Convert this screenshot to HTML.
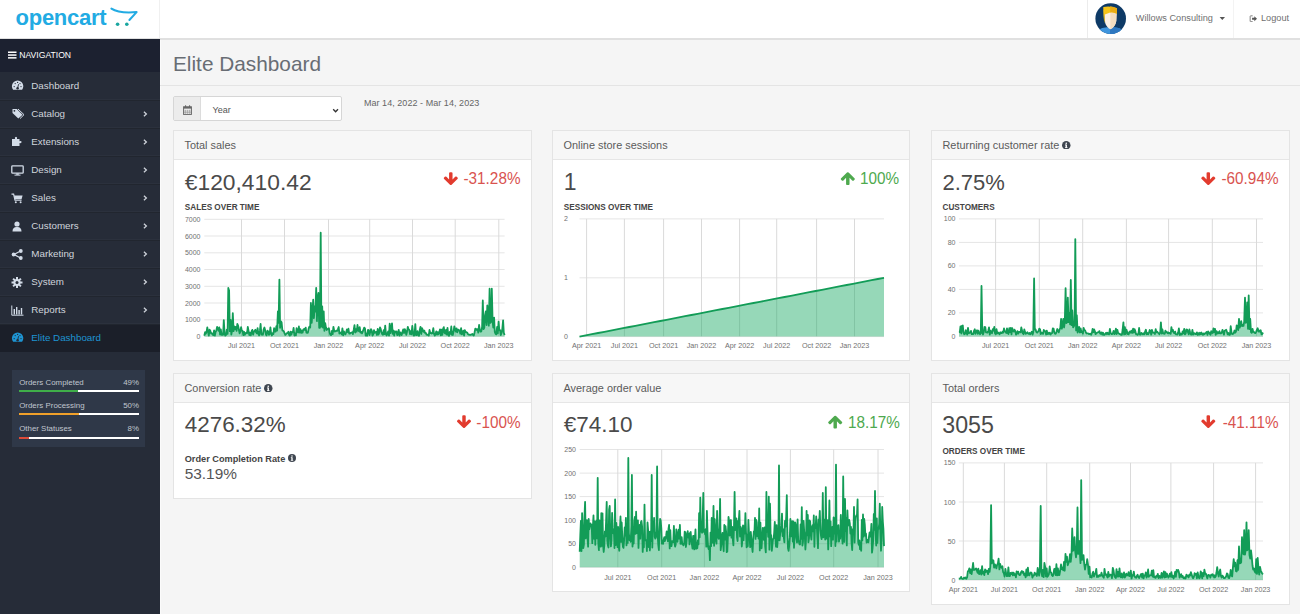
<!DOCTYPE html>
<html><head><meta charset="utf-8"><title>Elite Dashboard</title>
<style>
html,body{margin:0;padding:0;width:1300px;height:614px;overflow:hidden;background:#f5f5f5;font-family:"Liberation Sans",sans-serif}
.t{position:absolute;white-space:nowrap}
.r{position:absolute}
.icon{position:absolute;width:13px;height:11px}
.info{display:inline-block;width:8px;height:8px;border-radius:50%;background:#444;color:#fff;font-size:6.5px;line-height:8px;text-align:center;font-weight:700;vertical-align:1px}
svg text{font-family:"Liberation Sans",sans-serif}
</style></head><body>
<div class="r" style="left:0px;top:0px;width:1300px;height:614px;background:#f5f5f5;"></div>
<div class="r" style="left:0px;top:0px;width:1300px;height:38px;background:#fff;"></div>
<div class="r" style="left:0px;top:38px;width:1300px;height:2px;background:#e0e0e0;"></div>
<div class="r" style="left:159px;top:0px;width:1px;height:38px;background:#f0f0f0;"></div>
<div class="t" style="left:15.50px;top:7.40px;font-size:22px;line-height:22px;color:#22abe3;font-weight:700;letter-spacing:-0.25px;">opencart</div>
<svg class="r" style="left:105px;top:4px" width="40" height="30" viewBox="105 4 40 30">
<path d="M111.4 8.6 Q 119 13.6 136.6 12.1 L 129.4 20" fill="none" stroke="#22abe3" stroke-width="2" stroke-linecap="round" stroke-linejoin="round"/>
<circle cx="117.6" cy="24.2" r="1.8" fill="#1aa6a0"/><circle cx="126.8" cy="24.2" r="1.8" fill="#1aa6a0"/>
</svg>
<div class="r" style="left:1087px;top:0px;width:1px;height:38px;background:#ececec;"></div>
<div class="r" style="left:1233px;top:0px;width:1px;height:38px;background:#f3f3f3;"></div>
<svg class="r" style="left:1094px;top:2px" width="34" height="34" viewBox="0 0 34 34">
<defs><clipPath id="av"><circle cx="16.7" cy="16.6" r="15.3"/></clipPath></defs>
<circle cx="16.7" cy="16.6" r="15.3" fill="#0e3a66"/>
<g clip-path="url(#av)">
<path d="M2 34 L4 28 Q9 24.5 16 25.5 Q24 24.5 29 28 L31 34 Z" fill="#3f95dd"/>
<path d="M16 25.5 Q24 24.5 29 28 L31 34 L16 34 Z" fill="#2f78c0"/>
<path d="M9.8 8 L22.8 7 L22.3 19 Q21.2 25 16.3 27.3 Q12.6 25.6 11.2 21 Z" fill="#fcf1e4"/>
<path d="M16.3 7.5 L22.8 7 L22.3 19 Q21.2 25 16.3 27.3 Z" fill="#f3ddc0"/>
<path d="M9.3 5 Q16 3.4 23 6.3 L22.9 11.8 Q19.5 9.8 16.2 10.4 L10.8 12.6 L10.7 21.4 Q9 15 9.3 5 Z" fill="#f6c51a"/>
<path d="M16.2 4.3 Q20 4.6 23 6.3 L22.9 11.8 Q19.5 9.8 16.2 10.4 Z" fill="#e9ab12"/>
</g></svg>
<div class="t" style="left:1135.80px;top:14.48px;font-size:9.2px;line-height:9.2px;color:#707070;font-weight:400;">Willows Consulting</div>
<svg class="r" style="left:1219px;top:16px" width="7" height="5" viewBox="0 0 7 5"><path d="M0.6 1 L6 1 L3.3 4 Z" fill="#555"/></svg>
<svg class="r" style="left:1248.8px;top:14.8px" width="9" height="7.5" viewBox="0 0 10 9">
<path d="M4 1 H1.6 Q1 1 1 1.6 V7.4 Q1 8 1.6 8 H4" fill="none" stroke="#777" stroke-width="1.1"/>
<path d="M3.3 3.4 H6 V1.5 L9.2 4.5 L6 7.5 V5.6 H3.3 Z" fill="#555"/></svg>
<div class="t" style="left:1261.00px;top:14.48px;font-size:9.2px;line-height:9.2px;color:#707070;font-weight:400;">Logout</div>
<div class="r" style="left:0px;top:39px;width:160px;height:575px;background:#262c38;"></div>
<div class="r" style="left:0px;top:39px;width:160px;height:33px;background:#1c2130;"></div>
<svg class="r" style="left:8px;top:51px" width="9" height="8" viewBox="0 0 9 8"><rect x="0" y="0.5" width="8.5" height="1.5" fill="#fff"/><rect x="0" y="3.3" width="8.5" height="1.5" fill="#fff"/><rect x="0" y="6.1" width="8.5" height="1.5" fill="#fff"/></svg>
<div class="t" style="left:19.20px;top:51.25px;font-size:8.65px;line-height:8.65px;color:#fff;font-weight:400;">NAVIGATION</div>
<div class="r" style="left:0px;top:99px;width:160px;height:1px;background:#2b313d;"></div>
<div class="r" style="left:0px;top:100px;width:160px;height:1px;background:#21262f;"></div>
<div class="t" style="left:31.30px;top:80.87px;font-size:9.8px;line-height:9.8px;color:#d0d5dc;font-weight:400;">Dashboard</div>
<div class="icon" style="left:11px;top:80.3px;color:#d0d5dc"><svg width="13" height="11" viewBox="0 0 13 11" style="display:block"><path d="M2.1 9.8 A5.7 5.7 0 1 1 11.1 9.8 Z" fill="#d3dce8"/><circle cx="6.6" cy="8.2" r="1.2" fill="#262c38"/><path d="M6.6 8.2 L7.6 4.2" stroke="#262c38" stroke-width="0.9"/><circle cx="3.2" cy="6.6" r="0.65" fill="#262c38"/><circle cx="4.2" cy="3.6" r="0.65" fill="#262c38"/><circle cx="6.6" cy="2.4" r="0.65" fill="#262c38"/><circle cx="9" cy="3.6" r="0.65" fill="#262c38"/><circle cx="10" cy="6.6" r="0.65" fill="#262c38"/></svg></div>
<div class="r" style="left:0px;top:127px;width:160px;height:1px;background:#2b313d;"></div>
<div class="r" style="left:0px;top:128px;width:160px;height:1px;background:#21262f;"></div>
<div class="t" style="left:31.30px;top:108.87px;font-size:9.8px;line-height:9.8px;color:#d0d5dc;font-weight:400;">Catalog</div>
<svg class="r" style="left:143px;top:111px" width="5" height="6" viewBox="0 0 5 6"><path d="M0.9 0.7 L3.4 3 L0.9 5.3" fill="none" stroke="#d0d5dc" stroke-width="1.25"/></svg>
<div class="icon" style="left:11.5px;top:107.8px;color:#d0d5dc"><svg width="13" height="11" viewBox="0 0 13 11" style="display:block"><path d="M0.5 1 H4.8 L10.5 6.7 L6.3 10.6 L0.5 5 Z" fill="#d3dce8"/><path d="M6 1 L12 6.7 L8 10.6" fill="none" stroke="#d3dce8" stroke-width="1"/><circle cx="2.4" cy="2.8" r="0.9" fill="#262c38"/></svg></div>
<div class="r" style="left:0px;top:155px;width:160px;height:1px;background:#2b313d;"></div>
<div class="r" style="left:0px;top:156px;width:160px;height:1px;background:#21262f;"></div>
<div class="t" style="left:31.30px;top:136.87px;font-size:9.8px;line-height:9.8px;color:#d0d5dc;font-weight:400;">Extensions</div>
<svg class="r" style="left:143px;top:139px" width="5" height="6" viewBox="0 0 5 6"><path d="M0.9 0.7 L3.4 3 L0.9 5.3" fill="none" stroke="#d0d5dc" stroke-width="1.25"/></svg>
<div class="icon" style="left:11px;top:135.8px;color:#d0d5dc"><svg width="13" height="11" viewBox="0 0 13 11" style="display:block"><path d="M1 3 H4 Q3.3 1 5 0.8 Q6.7 1 6 3 H8.5 V5.2 Q10.5 4.5 10.6 6 Q10.5 7.6 8.5 7 V10 H1 Z" fill="#d3dce8"/></svg></div>
<div class="r" style="left:0px;top:183px;width:160px;height:1px;background:#2b313d;"></div>
<div class="r" style="left:0px;top:184px;width:160px;height:1px;background:#21262f;"></div>
<div class="t" style="left:31.30px;top:164.87px;font-size:9.8px;line-height:9.8px;color:#d0d5dc;font-weight:400;">Design</div>
<svg class="r" style="left:143px;top:167px" width="5" height="6" viewBox="0 0 5 6"><path d="M0.9 0.7 L3.4 3 L0.9 5.3" fill="none" stroke="#d0d5dc" stroke-width="1.25"/></svg>
<div class="icon" style="left:11px;top:165px;color:#d0d5dc"><svg width="13" height="11" viewBox="0 0 13 11" style="display:block"><rect x="0.8" y="0.8" width="11.4" height="7.4" rx="0.8" fill="none" stroke="#d3dce8" stroke-width="1.3"/><rect x="5.2" y="8.4" width="2.6" height="1.4" fill="#d3dce8"/><rect x="3.5" y="9.6" width="6" height="1" fill="#d3dce8"/></svg></div>
<div class="r" style="left:0px;top:211px;width:160px;height:1px;background:#2b313d;"></div>
<div class="r" style="left:0px;top:212px;width:160px;height:1px;background:#21262f;"></div>
<div class="t" style="left:31.30px;top:192.87px;font-size:9.8px;line-height:9.8px;color:#d0d5dc;font-weight:400;">Sales</div>
<svg class="r" style="left:143px;top:195px" width="5" height="6" viewBox="0 0 5 6"><path d="M0.9 0.7 L3.4 3 L0.9 5.3" fill="none" stroke="#d0d5dc" stroke-width="1.25"/></svg>
<div class="icon" style="left:11px;top:193px;color:#d0d5dc"><svg width="13" height="11" viewBox="0 0 13 11" style="display:block"><path d="M0.5 1.2 H2.6 L4 7.2 H10.6" fill="none" stroke="#d3dce8" stroke-width="1.2"/><path d="M3 2.6 H11.6 L10.6 6 H3.8 Z" fill="#d3dce8"/><circle cx="4.8" cy="9.3" r="1" fill="#d3dce8"/><circle cx="9.6" cy="9.3" r="1" fill="#d3dce8"/></svg></div>
<div class="r" style="left:0px;top:239px;width:160px;height:1px;background:#2b313d;"></div>
<div class="r" style="left:0px;top:240px;width:160px;height:1px;background:#21262f;"></div>
<div class="t" style="left:31.30px;top:220.87px;font-size:9.8px;line-height:9.8px;color:#d0d5dc;font-weight:400;">Customers</div>
<svg class="r" style="left:143px;top:223px" width="5" height="6" viewBox="0 0 5 6"><path d="M0.9 0.7 L3.4 3 L0.9 5.3" fill="none" stroke="#d0d5dc" stroke-width="1.25"/></svg>
<div class="icon" style="left:11px;top:221px;color:#d0d5dc"><svg width="13" height="11" viewBox="0 0 13 11" style="display:block"><circle cx="6" cy="3" r="2.6" fill="#d3dce8"/><path d="M1.5 10.5 Q1.5 5.8 6 6 Q10.5 5.8 10.5 10.5 Z" fill="#d3dce8"/></svg></div>
<div class="r" style="left:0px;top:267px;width:160px;height:1px;background:#2b313d;"></div>
<div class="r" style="left:0px;top:268px;width:160px;height:1px;background:#21262f;"></div>
<div class="t" style="left:31.30px;top:248.87px;font-size:9.8px;line-height:9.8px;color:#d0d5dc;font-weight:400;">Marketing</div>
<svg class="r" style="left:143px;top:251px" width="5" height="6" viewBox="0 0 5 6"><path d="M0.9 0.7 L3.4 3 L0.9 5.3" fill="none" stroke="#d0d5dc" stroke-width="1.25"/></svg>
<div class="icon" style="left:11px;top:249px;color:#d0d5dc"><svg width="13" height="11" viewBox="0 0 13 11" style="display:block"><path d="M9.5 2 L3 5.5 L9.5 9" fill="none" stroke="#d3dce8" stroke-width="1.3"/><circle cx="9.8" cy="2" r="1.9" fill="#d3dce8"/><circle cx="2.6" cy="5.5" r="1.9" fill="#d3dce8"/><circle cx="9.8" cy="9" r="1.9" fill="#d3dce8"/></svg></div>
<div class="r" style="left:0px;top:295px;width:160px;height:1px;background:#2b313d;"></div>
<div class="r" style="left:0px;top:296px;width:160px;height:1px;background:#21262f;"></div>
<div class="t" style="left:31.30px;top:276.87px;font-size:9.8px;line-height:9.8px;color:#d0d5dc;font-weight:400;">System</div>
<svg class="r" style="left:143px;top:279px" width="5" height="6" viewBox="0 0 5 6"><path d="M0.9 0.7 L3.4 3 L0.9 5.3" fill="none" stroke="#d0d5dc" stroke-width="1.25"/></svg>
<div class="icon" style="left:11px;top:277px;color:#d0d5dc"><svg width="13" height="11" viewBox="0 0 13 11" style="display:block"><circle cx="6" cy="5.5" r="3.6" fill="#d3dce8"/><rect x="5" y="0" width="2" height="11" fill="#d3dce8" transform="rotate(0 6 5.5)"/><rect x="5" y="0" width="2" height="11" fill="#d3dce8" transform="rotate(45 6 5.5)"/><rect x="5" y="0" width="2" height="11" fill="#d3dce8" transform="rotate(90 6 5.5)"/><rect x="5" y="0" width="2" height="11" fill="#d3dce8" transform="rotate(135 6 5.5)"/><circle cx="6" cy="5.5" r="1.5" fill="#262c38"/></svg></div>
<div class="r" style="left:0px;top:323px;width:160px;height:1px;background:#2b313d;"></div>
<div class="r" style="left:0px;top:324px;width:160px;height:1px;background:#21262f;"></div>
<div class="t" style="left:31.30px;top:304.87px;font-size:9.8px;line-height:9.8px;color:#d0d5dc;font-weight:400;">Reports</div>
<svg class="r" style="left:143px;top:307px" width="5" height="6" viewBox="0 0 5 6"><path d="M0.9 0.7 L3.4 3 L0.9 5.3" fill="none" stroke="#d0d5dc" stroke-width="1.25"/></svg>
<div class="icon" style="left:11px;top:305px;color:#d0d5dc"><svg width="13" height="11" viewBox="0 0 13 11" style="display:block"><path d="M0.8 0.5 V10.2 H12.5" fill="none" stroke="#d3dce8" stroke-width="1"/><rect x="2.6" y="4" width="1.4" height="5.5" fill="#d3dce8"/><rect x="5" y="2" width="1.4" height="7.5" fill="#d3dce8"/><rect x="7.4" y="5" width="1.4" height="4.5" fill="#d3dce8"/><rect x="9.8" y="3" width="1.4" height="6.5" fill="#d3dce8"/></svg></div>
<div class="r" style="left:0px;top:325px;width:160px;height:27px;background:#1b1f29;"></div>
<div class="t" style="left:31.30px;top:332.87px;font-size:9.8px;line-height:9.8px;color:#1e95d3;font-weight:400;">Elite Dashboard</div>
<div class="icon" style="left:11px;top:332.3px;color:#1e95d3"><svg width="13" height="11" viewBox="0 0 13 11" style="display:block"><path d="M2.1 9.8 A5.7 5.7 0 1 1 11.1 9.8 Z" fill="#1e95d3"/><circle cx="6.6" cy="8.2" r="1.2" fill="#262c38"/><path d="M6.6 8.2 L7.6 4.2" stroke="#262c38" stroke-width="0.9"/><circle cx="3.2" cy="6.6" r="0.65" fill="#262c38"/><circle cx="4.2" cy="3.6" r="0.65" fill="#262c38"/><circle cx="6.6" cy="2.4" r="0.65" fill="#262c38"/><circle cx="9" cy="3.6" r="0.65" fill="#262c38"/><circle cx="10" cy="6.6" r="0.65" fill="#262c38"/></svg></div>
<div class="r" style="left:160px;top:40px;width:1px;height:574px;background:#fbfbfb;"></div>
<div class="r" style="left:12px;top:370px;width:133px;height:77px;background:#2f3848;"></div>
<div class="t" style="left:19.20px;top:378.59px;font-size:7.9px;line-height:7.9px;color:#c0c6cf;font-weight:400;">Orders Completed</div>
<div class="t" style="right:1161.00px;top:378.59px;font-size:7.9px;line-height:7.9px;color:#c0c6cf;font-weight:400;">49%</div>
<div class="r" style="left:19px;top:390px;width:120px;height:2px;background:#fff;"></div>
<div class="r" style="left:19px;top:390px;width:58.8px;height:2px;background:#3fae49;"></div>
<div class="t" style="left:19.20px;top:402.09px;font-size:7.9px;line-height:7.9px;color:#c0c6cf;font-weight:400;">Orders Processing</div>
<div class="t" style="right:1161.00px;top:402.09px;font-size:7.9px;line-height:7.9px;color:#c0c6cf;font-weight:400;">50%</div>
<div class="r" style="left:19px;top:413.4px;width:120px;height:2.0px;background:#fff;"></div>
<div class="r" style="left:19px;top:413.4px;width:60.0px;height:2.0px;background:#f0a02a;"></div>
<div class="t" style="left:19.20px;top:425.09px;font-size:7.9px;line-height:7.9px;color:#c0c6cf;font-weight:400;">Other Statuses</div>
<div class="t" style="right:1161.00px;top:425.09px;font-size:7.9px;line-height:7.9px;color:#c0c6cf;font-weight:400;">8%</div>
<div class="r" style="left:19px;top:436.5px;width:120px;height:2.0px;background:#fff;"></div>
<div class="r" style="left:19px;top:436.5px;width:9.600000000000001px;height:2.0px;background:#dd4b39;"></div>
<div class="t" style="left:173.00px;top:54.22px;font-size:20.8px;line-height:20.8px;color:#686d74;font-weight:400;">Elite Dashboard</div>
<div class="r" style="left:160px;top:85px;width:1140px;height:1px;background:#e4e4e4;"></div>
<div class="r" style="left:173px;top:96px;width:167px;height:23px;border:1px solid #d6d6d6;border-radius:2px;background:#fff"></div>
<div class="r" style="left:174px;top:97px;width:26px;height:23px;background:#ececec;"></div>
<div class="r" style="left:200px;top:97px;width:1px;height:23px;background:#dcdcdc;"></div>
<svg class="r" style="left:182.5px;top:104.5px" width="9" height="10" viewBox="0 0 9 10">
<rect x="0.6" y="1.8" width="7.8" height="7.6" fill="none" stroke="#666" stroke-width="1"/>
<rect x="0.6" y="1.8" width="7.8" height="1.8" fill="#666"/>
<rect x="2" y="0.3" width="1.1" height="2" fill="#666"/><rect x="6" y="0.3" width="1.1" height="2" fill="#666"/>
<path d="M2.5 4.8 V8.8 M4.5 4.8 V8.8 M6.5 4.8 V8.8 M1 6.1 H8 M1 7.5 H8" stroke="#999" stroke-width="0.6"/></svg>
<div class="t" style="left:212.60px;top:105.85px;font-size:9px;line-height:9px;color:#555;font-weight:400;">Year</div>
<svg class="r" style="left:331.5px;top:107.5px" width="8" height="6" viewBox="0 0 8 6"><path d="M1.2 1.2 L3.6 3.8 L6 1.2" fill="none" stroke="#333" stroke-width="1.3"/></svg>
<div class="t" style="left:363.90px;top:98.85px;font-size:9px;line-height:9px;color:#666;font-weight:400;letter-spacing:0.05px;">Mar 14, 2022 - Mar 14, 2023</div>
<div class="r" style="left:173px;top:130px;width:357px;height:229px;border:1px solid #e4e4e4;background:#fff"></div>
<div class="r" style="left:174px;top:131px;width:357px;height:28px;background:#f7f7f7;"></div>
<div class="r" style="left:174px;top:159px;width:357px;height:1px;background:#e6e6e6;"></div>
<div class="t" style="left:184.50px;top:139.54px;font-size:10.9px;line-height:10.9px;color:#5b5b5b;font-weight:400;">Total sales</div>
<div class="r" style="left:552px;top:130px;width:356px;height:229px;border:1px solid #e4e4e4;background:#fff"></div>
<div class="r" style="left:553px;top:131px;width:356px;height:28px;background:#f7f7f7;"></div>
<div class="r" style="left:553px;top:159px;width:356px;height:1px;background:#e6e6e6;"></div>
<div class="t" style="left:563.50px;top:139.54px;font-size:10.9px;line-height:10.9px;color:#5b5b5b;font-weight:400;">Online store sessions</div>
<div class="r" style="left:931px;top:130px;width:357px;height:229px;border:1px solid #e4e4e4;background:#fff"></div>
<div class="r" style="left:932px;top:131px;width:357px;height:28px;background:#f7f7f7;"></div>
<div class="r" style="left:932px;top:159px;width:357px;height:1px;background:#e6e6e6;"></div>
<div class="t" style="left:942.50px;top:139.54px;font-size:10.9px;line-height:10.9px;color:#5b5b5b;font-weight:400;">Returning customer rate <svg width="8.5" height="8.5" viewBox="0 0 10 10" style="vertical-align:-0.5px"><circle cx="5" cy="5" r="5" fill="#3f4650"/><rect x="4.2" y="4.2" width="1.6" height="3.9" fill="#fff"/><rect x="3.5" y="7.4" width="3" height="0.9" fill="#fff"/><rect x="3.5" y="4.2" width="1.6" height="0.9" fill="#fff"/><circle cx="5" cy="2.6" r="0.95" fill="#fff"/></svg></div>
<div class="r" style="left:173px;top:373px;width:357px;height:124px;border:1px solid #e4e4e4;background:#fff"></div>
<div class="r" style="left:174px;top:374px;width:357px;height:28px;background:#f7f7f7;"></div>
<div class="r" style="left:174px;top:402px;width:357px;height:1px;background:#e6e6e6;"></div>
<div class="t" style="left:184.50px;top:382.54px;font-size:10.9px;line-height:10.9px;color:#5b5b5b;font-weight:400;">Conversion rate <svg width="8.5" height="8.5" viewBox="0 0 10 10" style="vertical-align:-0.5px"><circle cx="5" cy="5" r="5" fill="#3f4650"/><rect x="4.2" y="4.2" width="1.6" height="3.9" fill="#fff"/><rect x="3.5" y="7.4" width="3" height="0.9" fill="#fff"/><rect x="3.5" y="4.2" width="1.6" height="0.9" fill="#fff"/><circle cx="5" cy="2.6" r="0.95" fill="#fff"/></svg></div>
<div class="r" style="left:552px;top:373px;width:356px;height:217px;border:1px solid #e4e4e4;background:#fff"></div>
<div class="r" style="left:553px;top:374px;width:356px;height:28px;background:#f7f7f7;"></div>
<div class="r" style="left:553px;top:402px;width:356px;height:1px;background:#e6e6e6;"></div>
<div class="t" style="left:563.50px;top:382.54px;font-size:10.9px;line-height:10.9px;color:#5b5b5b;font-weight:400;">Average order value</div>
<div class="r" style="left:931px;top:373px;width:357px;height:230px;border:1px solid #e4e4e4;background:#fff"></div>
<div class="r" style="left:932px;top:374px;width:357px;height:28px;background:#f7f7f7;"></div>
<div class="r" style="left:932px;top:402px;width:357px;height:1px;background:#e6e6e6;"></div>
<div class="t" style="left:942.50px;top:382.54px;font-size:10.9px;line-height:10.9px;color:#5b5b5b;font-weight:400;">Total orders</div>
<div class="t" style="left:184.80px;top:170.82px;font-size:22.8px;line-height:22.8px;color:#4a4a4a;font-weight:400;">€120,410.42</div>
<div class="t" style="left:563.70px;top:170.85px;font-size:23px;line-height:23px;color:#4a4a4a;font-weight:400;transform:scaleY(1.05);transform-origin:0 85%;">1</div>
<div class="t" style="left:942.50px;top:171.60px;font-size:22px;line-height:22px;color:#4a4a4a;font-weight:400;">2.75%</div>
<div class="t" style="left:184.80px;top:414.36px;font-size:22.4px;line-height:22.4px;color:#4a4a4a;font-weight:400;">4276.32%</div>
<div class="t" style="left:563.70px;top:414.27px;font-size:22.5px;line-height:22.5px;color:#4a4a4a;font-weight:400;">€74.10</div>
<div class="t" style="left:942.30px;top:413.58px;font-size:23.2px;line-height:23.2px;color:#4a4a4a;font-weight:400;">3055</div>
<div class="t" style="right:779.50px;top:171.19px;font-size:15.3px;line-height:15.3px;color:#d9534f;font-weight:400;transform:scaleY(1.12);transform-origin:0 85%;">-31.28%</div>
<svg class="r" style="left:0;top:0" width="1300" height="614" viewBox="0 0 1300 614"><path d="M1611 832q0 53-37 90l-651 652q-38 36-91 36-54 0-90-36l-651-652q-38-36-38-90 0-53 38-91l74-75q39-37 91-37 53 0 90 37l294 294v-704q0-52 38-90t90-38h128q52 0 90 38t38 90v704l294-294q37-37 90-37 52 0 91 37l75 75q37 39 37 91z" fill="#e23b2e" transform="translate(443.8,172.2) scale(0.008986,0.008637) translate(-53,-128)"/></svg>
<div class="t" style="right:401.00px;top:171.19px;font-size:15.3px;line-height:15.3px;color:#4ea94e;font-weight:400;transform:scaleY(1.12);transform-origin:0 85%;">100%</div>
<svg class="r" style="left:0;top:0" width="1300" height="614" viewBox="0 0 1300 614"><path d="M1611 971q0 51-37 90l-75 75q-38 38-91 38-54 0-90-38l-294-293v704q0 52-37.5 84.5t-90.5 32.5h-128q-53 0-90.5-32.5t-37.5-84.5v-704l-294 293q-36 38-90 38t-90-38l-75-75q-38-38-38-90 0-53 38-91l651-651q35-37 90-37 54 0 91 37l651 651q37 39 37 91z" fill="#4ea94e" transform="translate(840.8,172.2) scale(0.008986,0.008696) translate(-53,-192)"/></svg>
<div class="t" style="right:21.50px;top:171.19px;font-size:15.3px;line-height:15.3px;color:#d9534f;font-weight:400;transform:scaleY(1.12);transform-origin:0 85%;">-60.94%</div>
<svg class="r" style="left:0;top:0" width="1300" height="614" viewBox="0 0 1300 614"><path d="M1611 832q0 53-37 90l-651 652q-38 36-91 36-54 0-90-36l-651-652q-38-36-38-90 0-53 38-91l74-75q39-37 91-37 53 0 90 37l294 294v-704q0-52 38-90t90-38h128q52 0 90 38t38 90v704l294-294q37-37 90-37 52 0 91 37l75 75q37 39 37 91z" fill="#e23b2e" transform="translate(1201.3,172.2) scale(0.008986,0.008637) translate(-53,-128)"/></svg>
<div class="t" style="right:779.50px;top:414.89px;font-size:15.3px;line-height:15.3px;color:#d9534f;font-weight:400;transform:scaleY(1.12);transform-origin:0 85%;">-100%</div>
<svg class="r" style="left:0;top:0" width="1300" height="614" viewBox="0 0 1300 614"><path d="M1611 832q0 53-37 90l-651 652q-38 36-91 36-54 0-90-36l-651-652q-38-36-38-90 0-53 38-91l74-75q39-37 91-37 53 0 90 37l294 294v-704q0-52 38-90t90-38h128q52 0 90 38t38 90v704l294-294q37-37 90-37 52 0 91 37l75 75q37 39 37 91z" fill="#e23b2e" transform="translate(457,415.2) scale(0.008986,0.008637) translate(-53,-128)"/></svg>
<div class="t" style="right:400.20px;top:414.89px;font-size:15.3px;line-height:15.3px;color:#4ea94e;font-weight:400;transform:scaleY(1.12);transform-origin:0 85%;">18.17%</div>
<svg class="r" style="left:0;top:0" width="1300" height="614" viewBox="0 0 1300 614"><path d="M1611 971q0 51-37 90l-75 75q-38 38-91 38-54 0-90-38l-294-293v704q0 52-37.5 84.5t-90.5 32.5h-128q-53 0-90.5-32.5t-37.5-84.5v-704l-294 293q-36 38-90 38t-90-38l-75-75q-38-38-38-90 0-53 38-91l651-651q35-37 90-37 54 0 91 37l651 651q37 39 37 91z" fill="#4ea94e" transform="translate(828.2,415.7) scale(0.008986,0.008696) translate(-53,-192)"/></svg>
<div class="t" style="right:21.50px;top:414.89px;font-size:15.3px;line-height:15.3px;color:#d9534f;font-weight:400;transform:scaleY(1.12);transform-origin:0 85%;">-41.11%</div>
<svg class="r" style="left:0;top:0" width="1300" height="614" viewBox="0 0 1300 614"><path d="M1611 832q0 53-37 90l-651 652q-38 36-91 36-54 0-90-36l-651-652q-38-36-38-90 0-53 38-91l74-75q39-37 91-37 53 0 90 37l294 294v-704q0-52 38-90t90-38h128q52 0 90 38t38 90v704l294-294q37-37 90-37 52 0 91 37l75 75q37 39 37 91z" fill="#e23b2e" transform="translate(1201.3,415.2) scale(0.008986,0.008637) translate(-53,-128)"/></svg>
<div class="t" style="left:184.80px;top:204.23px;font-size:8.2px;line-height:8.2px;color:#444;font-weight:700;">SALES OVER TIME</div>
<div class="t" style="left:563.80px;top:204.23px;font-size:8.2px;line-height:8.2px;color:#444;font-weight:700;">SESSIONS OVER TIME</div>
<div class="t" style="left:942.50px;top:204.23px;font-size:8.2px;line-height:8.2px;color:#444;font-weight:700;">CUSTOMERS</div>
<div class="t" style="left:942.50px;top:447.53px;font-size:8.2px;line-height:8.2px;color:#444;font-weight:700;">ORDERS OVER TIME</div>
<div class="t" style="left:184.70px;top:453.68px;font-size:9.2px;line-height:9.2px;color:#444;font-weight:700;">Order Completion Rate <svg width="8" height="8" viewBox="0 0 10 10" style="vertical-align:-0.5px"><circle cx="5" cy="5" r="5" fill="#3f4650"/><rect x="4.2" y="4.2" width="1.6" height="3.9" fill="#fff"/><rect x="3.5" y="7.4" width="3" height="0.9" fill="#fff"/><rect x="3.5" y="4.2" width="1.6" height="0.9" fill="#fff"/><circle cx="5" cy="2.6" r="0.95" fill="#fff"/></svg></div>
<div class="t" style="left:184.70px;top:465.91px;font-size:15.4px;line-height:15.4px;color:#555;font-weight:400;">53.19%</div>
<svg class="r" style="left:0;top:0" width="1300" height="614" viewBox="0 0 1300 614">
<line x1="204.3" y1="336.5" x2="504.6" y2="336.5" stroke="#e5e5e5" stroke-width="1"/>
<text x="200.5" y="339" text-anchor="end" font-size="7" fill="#707070">0</text>
<line x1="204.3" y1="319.8" x2="504.6" y2="319.8" stroke="#e5e5e5" stroke-width="1"/>
<text x="200.5" y="322.3" text-anchor="end" font-size="7" fill="#707070">1000</text>
<line x1="204.3" y1="303" x2="504.6" y2="303" stroke="#e5e5e5" stroke-width="1"/>
<text x="200.5" y="305.5" text-anchor="end" font-size="7" fill="#707070">2000</text>
<line x1="204.3" y1="286.3" x2="504.6" y2="286.3" stroke="#e5e5e5" stroke-width="1"/>
<text x="200.5" y="288.8" text-anchor="end" font-size="7" fill="#707070">3000</text>
<line x1="204.3" y1="269.5" x2="504.6" y2="269.5" stroke="#e5e5e5" stroke-width="1"/>
<text x="200.5" y="272" text-anchor="end" font-size="7" fill="#707070">4000</text>
<line x1="204.3" y1="252.8" x2="504.6" y2="252.8" stroke="#e5e5e5" stroke-width="1"/>
<text x="200.5" y="255.3" text-anchor="end" font-size="7" fill="#707070">5000</text>
<line x1="204.3" y1="236" x2="504.6" y2="236" stroke="#e5e5e5" stroke-width="1"/>
<text x="200.5" y="238.5" text-anchor="end" font-size="7" fill="#707070">6000</text>
<line x1="204.3" y1="219.3" x2="504.6" y2="219.3" stroke="#e5e5e5" stroke-width="1"/>
<text x="200.5" y="221.8" text-anchor="end" font-size="7" fill="#707070">7000</text>
<line x1="241.5" y1="219.3" x2="241.5" y2="336.5" stroke="#dadada" stroke-width="1"/>
<line x1="284.5" y1="219.3" x2="284.5" y2="336.5" stroke="#dadada" stroke-width="1"/>
<line x1="328.5" y1="219.3" x2="328.5" y2="336.5" stroke="#dadada" stroke-width="1"/>
<line x1="369.7" y1="219.3" x2="369.7" y2="336.5" stroke="#dadada" stroke-width="1"/>
<line x1="412.5" y1="219.3" x2="412.5" y2="336.5" stroke="#dadada" stroke-width="1"/>
<line x1="455.2" y1="219.3" x2="455.2" y2="336.5" stroke="#dadada" stroke-width="1"/>
<line x1="498.8" y1="219.3" x2="498.8" y2="336.5" stroke="#dadada" stroke-width="1"/>
<text x="241.5" y="347.6" text-anchor="middle" font-size="7.2" fill="#707070">Jul 2021</text>
<text x="284.5" y="347.6" text-anchor="middle" font-size="7.2" fill="#707070">Oct 2021</text>
<text x="328.5" y="347.6" text-anchor="middle" font-size="7.2" fill="#707070">Jan 2022</text>
<text x="369.7" y="347.6" text-anchor="middle" font-size="7.2" fill="#707070">Apr 2022</text>
<text x="412.5" y="347.6" text-anchor="middle" font-size="7.2" fill="#707070">Jul 2022</text>
<text x="455.2" y="347.6" text-anchor="middle" font-size="7.2" fill="#707070">Oct 2022</text>
<text x="498.8" y="347.6" text-anchor="middle" font-size="7.2" fill="#707070">Jan 2023</text>
<polygon points="204.3,336.5 204.3,335.8 205.1,332.2 205.8,333.7 206.6,331.7 207.3,327.3 208.1,332.0 208.8,335.6 209.6,329.7 210.3,330.8 211.1,333.4 211.8,333.1 212.6,334.5 213.3,335.2 214.1,330.3 214.8,335.7 215.6,331.8 216.3,330.7 217.1,326.9 217.8,328.4 218.6,330.8 219.3,327.5 220.1,334.7 220.8,329.5 221.6,334.8 222.3,334.9 223.1,334.8 223.8,320.1 224.6,333.8 225.3,335.6 226.1,334.8 226.8,329.6 227.6,333.9 228.3,287.9 229.1,290.5 229.8,331.2 230.6,319.8 231.3,334.5 232.1,330.6 232.8,313.1 233.6,331.2 234.3,326.5 235.1,329.1 235.8,326.8 236.6,330.9 237.3,324.0 238.1,325.7 238.8,329.2 239.6,333.3 240.3,331.6 241.1,327.1 241.8,330.7 242.6,330.8 243.3,335.2 244.1,331.8 244.8,334.9 245.6,333.2 246.3,332.6 247.1,333.2 247.8,326.9 248.6,331.1 249.3,335.0 250.1,332.8 250.8,335.3 251.6,331.2 252.3,329.9 253.1,334.7 253.8,332.1 254.6,330.6 255.4,329.8 256.1,332.4 256.9,333.3 257.6,328.2 258.4,334.0 259.1,335.4 259.9,330.9 260.6,324.0 261.4,334.6 262.1,334.3 262.9,334.8 263.6,329.6 264.4,327.5 265.1,330.1 265.9,334.4 266.6,335.4 267.4,330.7 268.1,331.4 268.9,334.8 269.6,334.1 270.4,327.4 271.1,333.3 271.9,335.5 272.6,333.1 273.4,334.1 274.1,328.1 274.9,331.6 275.6,331.5 276.4,326.2 277.1,330.7 277.9,311.4 278.6,322.8 279.4,279.6 280.1,327.8 280.9,321.4 281.6,322.3 282.4,330.5 283.1,330.6 283.9,331.5 284.6,333.4 285.4,334.9 286.1,334.0 286.9,333.1 287.6,333.2 288.4,331.8 289.1,334.9 289.9,335.7 290.6,331.7 291.4,334.6 292.1,331.9 292.9,332.1 293.6,327.8 294.4,335.5 295.1,333.5 295.9,335.4 296.6,328.1 297.4,331.4 298.1,332.5 298.9,326.5 299.6,332.6 300.4,329.1 301.1,332.9 301.9,330.6 302.6,332.6 303.4,329.4 304.1,328.9 304.9,330.0 305.7,327.6 306.4,332.7 307.2,332.9 307.9,332.6 308.7,328.4 309.4,326.6 310.2,327.5 310.9,303.0 311.7,322.9 312.4,311.4 313.2,299.7 313.9,318.2 314.7,306.4 315.4,311.5 316.2,287.9 316.9,321.1 317.7,298.0 318.4,293.0 319.2,327.8 319.9,327.8 320.7,232.7 321.4,326.6 322.2,306.4 322.9,327.5 323.7,311.4 324.4,330.8 325.2,323.1 325.9,327.3 326.7,330.0 327.4,329.2 328.2,328.6 328.9,328.2 329.7,333.0 330.4,334.9 331.2,335.1 331.9,331.0 332.7,334.1 333.4,326.8 334.2,330.8 334.9,331.6 335.7,331.1 336.4,330.7 337.2,330.8 337.9,329.3 338.7,327.0 339.4,333.6 340.2,333.1 340.9,332.5 341.7,334.4 342.4,328.4 343.2,335.3 343.9,331.3 344.7,333.0 345.4,334.4 346.2,332.3 346.9,329.5 347.7,332.1 348.4,328.6 349.2,333.6 349.9,333.7 350.7,332.8 351.4,332.6 352.2,332.3 352.9,334.1 353.7,329.9 354.5,325.1 355.2,332.5 356.0,329.1 356.7,331.6 357.5,325.0 358.2,330.1 359.0,331.4 359.7,327.1 360.5,332.7 361.2,331.9 362.0,333.4 362.7,331.6 363.5,329.5 364.2,327.7 365.0,328.5 365.7,335.7 366.5,333.8 367.2,335.7 368.0,329.8 368.7,330.0 369.5,335.0 370.2,332.1 371.0,329.2 371.7,330.5 372.5,335.6 373.2,334.3 374.0,330.2 374.7,332.8 375.5,332.0 376.2,331.8 377.0,335.0 377.7,329.0 378.5,334.5 379.2,332.8 380.0,327.4 380.7,328.9 381.5,332.4 382.2,334.1 383.0,334.7 383.7,330.2 384.5,334.1 385.2,325.6 386.0,334.3 386.7,335.5 387.5,333.3 388.2,331.4 389.0,335.6 389.7,323.6 390.5,333.1 391.2,328.2 392.0,323.3 392.7,333.8 393.5,330.7 394.2,335.6 395.0,331.3 395.7,332.2 396.5,331.4 397.2,335.2 398.0,334.1 398.7,329.9 399.5,335.7 400.2,332.4 401.0,333.5 401.7,335.0 402.5,331.8 403.2,329.4 404.0,333.1 404.8,329.1 405.5,330.9 406.3,334.9 407.0,331.9 407.8,326.8 408.5,329.2 409.3,330.0 410.0,334.0 410.8,331.1 411.5,334.4 412.3,325.8 413.0,332.2 413.8,335.5 414.5,335.4 415.3,324.1 416.0,334.8 416.8,335.1 417.5,331.2 418.3,334.5 419.0,335.8 419.8,329.6 420.5,326.8 421.3,334.0 422.0,328.2 422.8,329.8 423.5,331.8 424.3,330.6 425.0,332.9 425.8,332.9 426.5,334.7 427.3,334.9 428.0,334.7 428.8,335.5 429.5,330.0 430.3,333.2 431.0,332.9 431.8,333.6 432.5,333.1 433.3,328.2 434.0,333.8 434.8,335.6 435.5,334.5 436.3,331.3 437.0,334.6 437.8,332.2 438.5,334.3 439.3,332.2 440.0,329.3 440.8,335.4 441.5,329.7 442.3,334.9 443.0,329.1 443.8,327.2 444.5,332.9 445.3,333.6 446.0,330.0 446.8,334.5 447.5,327.9 448.3,335.1 449.0,335.8 449.8,331.9 450.5,333.9 451.3,326.5 452.0,334.8 452.8,335.0 453.5,331.8 454.3,326.3 455.1,329.4 455.8,331.6 456.6,328.3 457.3,332.3 458.1,329.6 458.8,330.0 459.6,330.8 460.3,333.7 461.1,328.2 461.8,334.3 462.6,333.4 463.3,330.6 464.1,335.7 464.8,330.1 465.6,332.1 466.3,332.2 467.1,332.5 467.8,333.8 468.6,334.7 469.3,334.7 470.1,335.0 470.8,334.7 471.6,334.7 472.3,334.0 473.1,335.0 473.8,335.5 474.6,332.2 475.3,328.6 476.1,329.0 476.8,330.1 477.6,329.2 478.3,332.7 479.1,324.8 479.8,329.9 480.6,331.6 481.3,331.3 482.1,327.0 482.8,300.5 483.6,329.1 484.3,327.8 485.1,315.1 485.8,311.5 486.6,325.0 487.3,305.4 488.1,316.2 488.8,325.7 489.6,288.7 490.3,322.9 491.1,321.8 491.8,288.7 492.6,321.3 493.3,327.7 494.1,317.6 494.8,331.9 495.6,334.0 496.3,334.3 497.1,327.0 497.8,333.4 498.6,321.6 499.3,330.2 500.1,330.1 500.8,335.0 501.6,332.9 502.3,329.0 503.1,320.4 503.8,332.8 504.6,335.1 504.6,336.5" fill="#17a862" fill-opacity="0.45"/>
<polyline points="204.3,335.8 205.1,332.2 205.8,333.7 206.6,331.7 207.3,327.3 208.1,332.0 208.8,335.6 209.6,329.7 210.3,330.8 211.1,333.4 211.8,333.1 212.6,334.5 213.3,335.2 214.1,330.3 214.8,335.7 215.6,331.8 216.3,330.7 217.1,326.9 217.8,328.4 218.6,330.8 219.3,327.5 220.1,334.7 220.8,329.5 221.6,334.8 222.3,334.9 223.1,334.8 223.8,320.1 224.6,333.8 225.3,335.6 226.1,334.8 226.8,329.6 227.6,333.9 228.3,287.9 229.1,290.5 229.8,331.2 230.6,319.8 231.3,334.5 232.1,330.6 232.8,313.1 233.6,331.2 234.3,326.5 235.1,329.1 235.8,326.8 236.6,330.9 237.3,324.0 238.1,325.7 238.8,329.2 239.6,333.3 240.3,331.6 241.1,327.1 241.8,330.7 242.6,330.8 243.3,335.2 244.1,331.8 244.8,334.9 245.6,333.2 246.3,332.6 247.1,333.2 247.8,326.9 248.6,331.1 249.3,335.0 250.1,332.8 250.8,335.3 251.6,331.2 252.3,329.9 253.1,334.7 253.8,332.1 254.6,330.6 255.4,329.8 256.1,332.4 256.9,333.3 257.6,328.2 258.4,334.0 259.1,335.4 259.9,330.9 260.6,324.0 261.4,334.6 262.1,334.3 262.9,334.8 263.6,329.6 264.4,327.5 265.1,330.1 265.9,334.4 266.6,335.4 267.4,330.7 268.1,331.4 268.9,334.8 269.6,334.1 270.4,327.4 271.1,333.3 271.9,335.5 272.6,333.1 273.4,334.1 274.1,328.1 274.9,331.6 275.6,331.5 276.4,326.2 277.1,330.7 277.9,311.4 278.6,322.8 279.4,279.6 280.1,327.8 280.9,321.4 281.6,322.3 282.4,330.5 283.1,330.6 283.9,331.5 284.6,333.4 285.4,334.9 286.1,334.0 286.9,333.1 287.6,333.2 288.4,331.8 289.1,334.9 289.9,335.7 290.6,331.7 291.4,334.6 292.1,331.9 292.9,332.1 293.6,327.8 294.4,335.5 295.1,333.5 295.9,335.4 296.6,328.1 297.4,331.4 298.1,332.5 298.9,326.5 299.6,332.6 300.4,329.1 301.1,332.9 301.9,330.6 302.6,332.6 303.4,329.4 304.1,328.9 304.9,330.0 305.7,327.6 306.4,332.7 307.2,332.9 307.9,332.6 308.7,328.4 309.4,326.6 310.2,327.5 310.9,303.0 311.7,322.9 312.4,311.4 313.2,299.7 313.9,318.2 314.7,306.4 315.4,311.5 316.2,287.9 316.9,321.1 317.7,298.0 318.4,293.0 319.2,327.8 319.9,327.8 320.7,232.7 321.4,326.6 322.2,306.4 322.9,327.5 323.7,311.4 324.4,330.8 325.2,323.1 325.9,327.3 326.7,330.0 327.4,329.2 328.2,328.6 328.9,328.2 329.7,333.0 330.4,334.9 331.2,335.1 331.9,331.0 332.7,334.1 333.4,326.8 334.2,330.8 334.9,331.6 335.7,331.1 336.4,330.7 337.2,330.8 337.9,329.3 338.7,327.0 339.4,333.6 340.2,333.1 340.9,332.5 341.7,334.4 342.4,328.4 343.2,335.3 343.9,331.3 344.7,333.0 345.4,334.4 346.2,332.3 346.9,329.5 347.7,332.1 348.4,328.6 349.2,333.6 349.9,333.7 350.7,332.8 351.4,332.6 352.2,332.3 352.9,334.1 353.7,329.9 354.5,325.1 355.2,332.5 356.0,329.1 356.7,331.6 357.5,325.0 358.2,330.1 359.0,331.4 359.7,327.1 360.5,332.7 361.2,331.9 362.0,333.4 362.7,331.6 363.5,329.5 364.2,327.7 365.0,328.5 365.7,335.7 366.5,333.8 367.2,335.7 368.0,329.8 368.7,330.0 369.5,335.0 370.2,332.1 371.0,329.2 371.7,330.5 372.5,335.6 373.2,334.3 374.0,330.2 374.7,332.8 375.5,332.0 376.2,331.8 377.0,335.0 377.7,329.0 378.5,334.5 379.2,332.8 380.0,327.4 380.7,328.9 381.5,332.4 382.2,334.1 383.0,334.7 383.7,330.2 384.5,334.1 385.2,325.6 386.0,334.3 386.7,335.5 387.5,333.3 388.2,331.4 389.0,335.6 389.7,323.6 390.5,333.1 391.2,328.2 392.0,323.3 392.7,333.8 393.5,330.7 394.2,335.6 395.0,331.3 395.7,332.2 396.5,331.4 397.2,335.2 398.0,334.1 398.7,329.9 399.5,335.7 400.2,332.4 401.0,333.5 401.7,335.0 402.5,331.8 403.2,329.4 404.0,333.1 404.8,329.1 405.5,330.9 406.3,334.9 407.0,331.9 407.8,326.8 408.5,329.2 409.3,330.0 410.0,334.0 410.8,331.1 411.5,334.4 412.3,325.8 413.0,332.2 413.8,335.5 414.5,335.4 415.3,324.1 416.0,334.8 416.8,335.1 417.5,331.2 418.3,334.5 419.0,335.8 419.8,329.6 420.5,326.8 421.3,334.0 422.0,328.2 422.8,329.8 423.5,331.8 424.3,330.6 425.0,332.9 425.8,332.9 426.5,334.7 427.3,334.9 428.0,334.7 428.8,335.5 429.5,330.0 430.3,333.2 431.0,332.9 431.8,333.6 432.5,333.1 433.3,328.2 434.0,333.8 434.8,335.6 435.5,334.5 436.3,331.3 437.0,334.6 437.8,332.2 438.5,334.3 439.3,332.2 440.0,329.3 440.8,335.4 441.5,329.7 442.3,334.9 443.0,329.1 443.8,327.2 444.5,332.9 445.3,333.6 446.0,330.0 446.8,334.5 447.5,327.9 448.3,335.1 449.0,335.8 449.8,331.9 450.5,333.9 451.3,326.5 452.0,334.8 452.8,335.0 453.5,331.8 454.3,326.3 455.1,329.4 455.8,331.6 456.6,328.3 457.3,332.3 458.1,329.6 458.8,330.0 459.6,330.8 460.3,333.7 461.1,328.2 461.8,334.3 462.6,333.4 463.3,330.6 464.1,335.7 464.8,330.1 465.6,332.1 466.3,332.2 467.1,332.5 467.8,333.8 468.6,334.7 469.3,334.7 470.1,335.0 470.8,334.7 471.6,334.7 472.3,334.0 473.1,335.0 473.8,335.5 474.6,332.2 475.3,328.6 476.1,329.0 476.8,330.1 477.6,329.2 478.3,332.7 479.1,324.8 479.8,329.9 480.6,331.6 481.3,331.3 482.1,327.0 482.8,300.5 483.6,329.1 484.3,327.8 485.1,315.1 485.8,311.5 486.6,325.0 487.3,305.4 488.1,316.2 488.8,325.7 489.6,288.7 490.3,322.9 491.1,321.8 491.8,288.7 492.6,321.3 493.3,327.7 494.1,317.6 494.8,331.9 495.6,334.0 496.3,334.3 497.1,327.0 497.8,333.4 498.6,321.6 499.3,330.2 500.1,330.1 500.8,335.0 501.6,332.9 502.3,329.0 503.1,320.4 503.8,332.8 504.6,335.1" fill="none" stroke="#129c57" stroke-width="1.8" stroke-linejoin="round"/>
<line x1="579.5" y1="336.6" x2="884" y2="336.6" stroke="#e5e5e5" stroke-width="1"/>
<text x="568" y="339.1" text-anchor="end" font-size="7" fill="#707070">0</text>
<line x1="579.5" y1="277.8" x2="884" y2="277.8" stroke="#e5e5e5" stroke-width="1"/>
<text x="568" y="280.2" text-anchor="end" font-size="7" fill="#707070">1</text>
<line x1="579.5" y1="218.9" x2="884" y2="218.9" stroke="#e5e5e5" stroke-width="1"/>
<text x="568" y="221.4" text-anchor="end" font-size="7" fill="#707070">2</text>
<line x1="586.6" y1="218.9" x2="586.6" y2="336.6" stroke="#dadada" stroke-width="1"/>
<line x1="624.4" y1="218.9" x2="624.4" y2="336.6" stroke="#dadada" stroke-width="1"/>
<line x1="663.6" y1="218.9" x2="663.6" y2="336.6" stroke="#dadada" stroke-width="1"/>
<line x1="701.5" y1="218.9" x2="701.5" y2="336.6" stroke="#dadada" stroke-width="1"/>
<line x1="739.6" y1="218.9" x2="739.6" y2="336.6" stroke="#dadada" stroke-width="1"/>
<line x1="776.7" y1="218.9" x2="776.7" y2="336.6" stroke="#dadada" stroke-width="1"/>
<line x1="816.6" y1="218.9" x2="816.6" y2="336.6" stroke="#dadada" stroke-width="1"/>
<line x1="854.5" y1="218.9" x2="854.5" y2="336.6" stroke="#dadada" stroke-width="1"/>
<text x="586.6" y="347.6" text-anchor="middle" font-size="7.2" fill="#707070">Apr 2021</text>
<text x="624.4" y="347.6" text-anchor="middle" font-size="7.2" fill="#707070">Jul 2021</text>
<text x="663.6" y="347.6" text-anchor="middle" font-size="7.2" fill="#707070">Oct 2021</text>
<text x="701.5" y="347.6" text-anchor="middle" font-size="7.2" fill="#707070">Jan 2022</text>
<text x="739.6" y="347.6" text-anchor="middle" font-size="7.2" fill="#707070">Apr 2022</text>
<text x="776.7" y="347.6" text-anchor="middle" font-size="7.2" fill="#707070">Jul 2022</text>
<text x="816.6" y="347.6" text-anchor="middle" font-size="7.2" fill="#707070">Oct 2022</text>
<text x="854.5" y="347.6" text-anchor="middle" font-size="7.2" fill="#707070">Jan 2023</text>
<polygon points="579.5,336.6 579.5,336.6 585.7,335.4 591.9,334.2 598.1,333.0 604.4,331.8 610.6,330.6 616.8,329.4 623.0,328.2 629.2,327.0 635.4,325.8 641.6,324.6 647.9,323.4 654.1,322.2 660.3,321.0 666.5,319.8 672.7,318.6 678.9,317.4 685.1,316.2 691.4,315.0 697.6,313.8 703.8,312.6 710.0,311.4 716.2,310.2 722.4,309.0 728.6,307.8 734.9,306.6 741.1,305.4 747.3,304.2 753.5,303.0 759.7,301.8 765.9,300.6 772.1,299.4 778.4,298.2 784.6,297.0 790.8,295.8 797.0,294.6 803.2,293.4 809.4,292.2 815.6,291.0 821.9,289.8 828.1,288.6 834.3,287.4 840.5,286.2 846.7,285.0 852.9,283.8 859.1,282.6 865.4,281.4 871.6,280.2 877.8,279.0 884.0,277.8 884.0,336.6" fill="#17a862" fill-opacity="0.45"/>
<polyline points="579.5,336.6 585.7,335.4 591.9,334.2 598.1,333.0 604.4,331.8 610.6,330.6 616.8,329.4 623.0,328.2 629.2,327.0 635.4,325.8 641.6,324.6 647.9,323.4 654.1,322.2 660.3,321.0 666.5,319.8 672.7,318.6 678.9,317.4 685.1,316.2 691.4,315.0 697.6,313.8 703.8,312.6 710.0,311.4 716.2,310.2 722.4,309.0 728.6,307.8 734.9,306.6 741.1,305.4 747.3,304.2 753.5,303.0 759.7,301.8 765.9,300.6 772.1,299.4 778.4,298.2 784.6,297.0 790.8,295.8 797.0,294.6 803.2,293.4 809.4,292.2 815.6,291.0 821.9,289.8 828.1,288.6 834.3,287.4 840.5,286.2 846.7,285.0 852.9,283.8 859.1,282.6 865.4,281.4 871.6,280.2 877.8,279.0 884.0,277.8" fill="none" stroke="#129c57" stroke-width="1.8" stroke-linejoin="round"/>
<line x1="959" y1="336.4" x2="1263" y2="336.4" stroke="#e5e5e5" stroke-width="1"/>
<text x="955.5" y="338.9" text-anchor="end" font-size="7" fill="#707070">0</text>
<line x1="959" y1="312.9" x2="1263" y2="312.9" stroke="#e5e5e5" stroke-width="1"/>
<text x="955.5" y="315.4" text-anchor="end" font-size="7" fill="#707070">20</text>
<line x1="959" y1="289.4" x2="1263" y2="289.4" stroke="#e5e5e5" stroke-width="1"/>
<text x="955.5" y="291.9" text-anchor="end" font-size="7" fill="#707070">40</text>
<line x1="959" y1="265.9" x2="1263" y2="265.9" stroke="#e5e5e5" stroke-width="1"/>
<text x="955.5" y="268.4" text-anchor="end" font-size="7" fill="#707070">60</text>
<line x1="959" y1="242.4" x2="1263" y2="242.4" stroke="#e5e5e5" stroke-width="1"/>
<text x="955.5" y="244.9" text-anchor="end" font-size="7" fill="#707070">80</text>
<line x1="959" y1="218.9" x2="1263" y2="218.9" stroke="#e5e5e5" stroke-width="1"/>
<text x="955.5" y="221.4" text-anchor="end" font-size="7" fill="#707070">100</text>
<line x1="995.6" y1="218.9" x2="995.6" y2="336.4" stroke="#dadada" stroke-width="1"/>
<line x1="1039.3" y1="218.9" x2="1039.3" y2="336.4" stroke="#dadada" stroke-width="1"/>
<line x1="1082.7" y1="218.9" x2="1082.7" y2="336.4" stroke="#dadada" stroke-width="1"/>
<line x1="1126.4" y1="218.9" x2="1126.4" y2="336.4" stroke="#dadada" stroke-width="1"/>
<line x1="1168.6" y1="218.9" x2="1168.6" y2="336.4" stroke="#dadada" stroke-width="1"/>
<line x1="1212.3" y1="218.9" x2="1212.3" y2="336.4" stroke="#dadada" stroke-width="1"/>
<line x1="1256.5" y1="218.9" x2="1256.5" y2="336.4" stroke="#dadada" stroke-width="1"/>
<text x="995.6" y="347.6" text-anchor="middle" font-size="7.2" fill="#707070">Jul 2021</text>
<text x="1039.3" y="347.6" text-anchor="middle" font-size="7.2" fill="#707070">Oct 2021</text>
<text x="1082.7" y="347.6" text-anchor="middle" font-size="7.2" fill="#707070">Jan 2022</text>
<text x="1126.4" y="347.6" text-anchor="middle" font-size="7.2" fill="#707070">Apr 2022</text>
<text x="1168.6" y="347.6" text-anchor="middle" font-size="7.2" fill="#707070">Jul 2022</text>
<text x="1212.3" y="347.6" text-anchor="middle" font-size="7.2" fill="#707070">Oct 2022</text>
<text x="1256.5" y="347.6" text-anchor="middle" font-size="7.2" fill="#707070">Jan 2023</text>
<polygon points="959.0,336.4 959.0,332.5 959.8,332.1 960.5,326.4 961.3,333.5 962.0,325.9 962.8,325.5 963.5,332.8 964.3,334.3 965.0,333.7 965.8,330.2 966.5,333.0 967.3,334.5 968.0,327.9 968.8,333.2 969.5,333.0 970.3,332.5 971.0,330.9 971.8,334.2 972.5,333.9 973.3,334.1 974.0,331.0 974.8,329.3 975.5,333.8 976.3,331.1 977.0,330.2 977.8,333.9 978.5,330.7 979.3,332.8 980.0,334.2 980.8,333.0 981.5,285.9 982.3,332.8 983.0,334.5 983.8,331.9 984.5,327.0 985.3,327.2 986.0,332.3 986.8,332.5 987.5,332.6 988.3,330.8 989.0,327.4 989.8,334.6 990.5,330.6 991.3,332.2 992.0,333.3 992.8,329.1 993.5,330.5 994.3,327.0 995.0,333.5 995.8,334.1 996.5,329.1 997.3,333.4 998.0,332.5 998.8,333.2 999.5,334.3 1000.3,332.3 1001.0,333.0 1001.8,333.1 1002.5,331.6 1003.3,332.6 1004.0,328.5 1004.8,331.4 1005.5,331.6 1006.3,333.0 1007.0,328.4 1007.8,333.1 1008.5,334.0 1009.3,328.2 1010.0,332.1 1010.8,327.8 1011.5,334.4 1012.3,328.1 1013.0,330.9 1013.8,331.6 1014.5,329.7 1015.3,330.9 1016.0,334.6 1016.8,333.5 1017.5,331.2 1018.3,333.7 1019.0,331.8 1019.8,331.8 1020.6,332.4 1021.3,327.5 1022.1,330.7 1022.8,333.4 1023.6,334.2 1024.3,329.4 1025.1,332.2 1025.8,333.8 1026.6,333.2 1027.3,332.3 1028.1,333.5 1028.8,333.8 1029.6,332.9 1030.3,334.3 1031.1,333.1 1031.8,331.7 1032.6,334.6 1033.3,332.2 1034.1,278.4 1034.8,329.7 1035.6,329.5 1036.3,331.9 1037.1,332.7 1037.8,331.9 1038.6,330.9 1039.3,328.6 1040.1,329.4 1040.8,334.0 1041.6,332.6 1042.3,333.5 1043.1,333.9 1043.8,330.0 1044.6,331.2 1045.3,331.2 1046.1,334.5 1046.8,330.6 1047.6,334.1 1048.3,332.7 1049.1,333.9 1049.8,332.6 1050.6,334.5 1051.3,333.3 1052.1,333.2 1052.8,328.5 1053.6,328.6 1054.3,332.6 1055.1,333.9 1055.8,333.6 1056.6,331.3 1057.3,329.0 1058.1,331.5 1058.8,332.4 1059.6,329.2 1060.3,328.2 1061.1,318.8 1061.8,328.7 1062.6,325.7 1063.3,318.9 1064.1,327.5 1064.8,321.9 1065.6,288.2 1066.3,323.1 1067.1,322.3 1067.8,297.6 1068.6,322.1 1069.3,312.9 1070.1,324.3 1070.8,280.0 1071.6,325.1 1072.3,310.5 1073.1,327.3 1073.8,326.5 1074.6,324.1 1075.3,239.1 1076.1,330.4 1076.8,315.2 1077.6,332.5 1078.3,330.8 1079.1,327.0 1079.8,332.5 1080.6,328.3 1081.4,332.2 1082.1,331.6 1082.9,333.6 1083.6,327.9 1084.4,330.2 1085.1,330.4 1085.9,332.5 1086.6,333.5 1087.4,333.3 1088.1,333.4 1088.9,334.0 1089.6,334.0 1090.4,333.6 1091.1,334.8 1091.9,332.8 1092.6,329.0 1093.4,332.2 1094.1,329.4 1094.9,331.3 1095.6,334.2 1096.4,333.1 1097.1,332.7 1097.9,332.4 1098.6,332.2 1099.4,331.1 1100.1,333.4 1100.9,333.9 1101.6,332.4 1102.4,334.6 1103.1,332.8 1103.9,334.9 1104.6,334.8 1105.4,333.7 1106.1,332.7 1106.9,334.2 1107.6,332.7 1108.4,334.2 1109.1,334.3 1109.9,328.8 1110.6,332.8 1111.4,334.1 1112.1,334.0 1112.9,333.2 1113.6,330.8 1114.4,334.2 1115.1,333.2 1115.9,328.7 1116.6,334.1 1117.4,330.0 1118.1,332.9 1118.9,333.6 1119.6,334.1 1120.4,334.1 1121.1,334.9 1121.9,334.9 1122.6,330.0 1123.4,322.3 1124.1,334.5 1124.9,327.1 1125.6,334.2 1126.4,329.6 1127.1,331.7 1127.9,334.2 1128.6,334.4 1129.4,332.0 1130.1,331.3 1130.9,332.7 1131.6,330.7 1132.4,332.9 1133.1,328.7 1133.9,332.6 1134.6,329.2 1135.4,331.4 1136.1,334.4 1136.9,334.2 1137.6,334.9 1138.4,333.8 1139.1,328.0 1139.9,334.6 1140.6,334.7 1141.4,332.9 1142.2,333.4 1142.9,334.4 1143.7,333.2 1144.4,334.3 1145.2,331.3 1145.9,329.7 1146.7,334.3 1147.4,333.0 1148.2,334.2 1148.9,332.9 1149.7,330.0 1150.4,330.9 1151.2,334.7 1151.9,329.8 1152.7,332.6 1153.4,332.6 1154.2,333.1 1154.9,334.1 1155.7,329.2 1156.4,332.4 1157.2,331.7 1157.9,332.6 1158.7,333.2 1159.4,334.2 1160.2,332.6 1160.9,322.3 1161.7,333.5 1162.4,329.3 1163.2,333.4 1163.9,333.7 1164.7,333.9 1165.4,330.6 1166.2,332.2 1166.9,331.9 1167.7,333.2 1168.4,332.5 1169.2,333.4 1169.9,333.0 1170.7,333.9 1171.4,327.1 1172.2,331.4 1172.9,329.9 1173.7,332.6 1174.4,333.2 1175.2,331.6 1175.9,334.4 1176.7,334.4 1177.4,334.5 1178.2,332.3 1178.9,328.5 1179.7,335.0 1180.4,333.5 1181.2,334.7 1181.9,334.5 1182.7,331.3 1183.4,333.4 1184.2,328.9 1184.9,334.3 1185.7,333.5 1186.4,329.5 1187.2,329.7 1187.9,331.9 1188.7,334.3 1189.4,329.4 1190.2,332.8 1190.9,334.5 1191.7,334.5 1192.4,330.0 1193.2,334.5 1193.9,333.2 1194.7,333.3 1195.4,334.1 1196.2,334.1 1196.9,332.4 1197.7,334.9 1198.4,333.1 1199.2,334.6 1199.9,332.8 1200.7,334.2 1201.4,332.5 1202.2,334.2 1203.0,334.9 1203.7,333.4 1204.5,334.2 1205.2,333.4 1206.0,332.7 1206.7,332.0 1207.5,334.9 1208.2,331.5 1209.0,332.5 1209.7,333.6 1210.5,334.7 1211.2,331.2 1212.0,332.6 1212.7,333.0 1213.5,328.3 1214.2,332.2 1215.0,328.8 1215.7,334.8 1216.5,331.1 1217.2,333.6 1218.0,332.2 1218.7,333.3 1219.5,331.2 1220.2,333.4 1221.0,333.4 1221.7,332.8 1222.5,329.8 1223.2,332.2 1224.0,334.6 1224.7,330.6 1225.5,330.4 1226.2,329.8 1227.0,332.0 1227.7,334.4 1228.5,333.0 1229.2,334.8 1230.0,334.8 1230.7,326.2 1231.5,332.4 1232.2,334.2 1233.0,334.0 1233.7,333.2 1234.5,330.5 1235.2,332.7 1236.0,331.5 1236.7,325.3 1237.5,327.5 1238.2,330.1 1239.0,318.8 1239.7,327.6 1240.5,325.2 1241.2,321.1 1242.0,326.2 1242.7,325.4 1243.5,325.9 1244.2,321.7 1245.0,297.6 1245.7,322.8 1246.5,321.9 1247.2,302.3 1248.0,328.8 1248.7,295.3 1249.5,329.1 1250.2,318.8 1251.0,332.2 1251.7,332.9 1252.5,328.8 1253.2,331.8 1254.0,331.9 1254.7,332.9 1255.5,333.0 1256.2,331.6 1257.0,329.6 1257.7,328.2 1258.5,331.6 1259.2,330.6 1260.0,331.7 1260.7,330.2 1261.5,334.3 1262.2,334.2 1263.0,332.5 1263.0,336.4" fill="#17a862" fill-opacity="0.45"/>
<polyline points="959.0,332.5 959.8,332.1 960.5,326.4 961.3,333.5 962.0,325.9 962.8,325.5 963.5,332.8 964.3,334.3 965.0,333.7 965.8,330.2 966.5,333.0 967.3,334.5 968.0,327.9 968.8,333.2 969.5,333.0 970.3,332.5 971.0,330.9 971.8,334.2 972.5,333.9 973.3,334.1 974.0,331.0 974.8,329.3 975.5,333.8 976.3,331.1 977.0,330.2 977.8,333.9 978.5,330.7 979.3,332.8 980.0,334.2 980.8,333.0 981.5,285.9 982.3,332.8 983.0,334.5 983.8,331.9 984.5,327.0 985.3,327.2 986.0,332.3 986.8,332.5 987.5,332.6 988.3,330.8 989.0,327.4 989.8,334.6 990.5,330.6 991.3,332.2 992.0,333.3 992.8,329.1 993.5,330.5 994.3,327.0 995.0,333.5 995.8,334.1 996.5,329.1 997.3,333.4 998.0,332.5 998.8,333.2 999.5,334.3 1000.3,332.3 1001.0,333.0 1001.8,333.1 1002.5,331.6 1003.3,332.6 1004.0,328.5 1004.8,331.4 1005.5,331.6 1006.3,333.0 1007.0,328.4 1007.8,333.1 1008.5,334.0 1009.3,328.2 1010.0,332.1 1010.8,327.8 1011.5,334.4 1012.3,328.1 1013.0,330.9 1013.8,331.6 1014.5,329.7 1015.3,330.9 1016.0,334.6 1016.8,333.5 1017.5,331.2 1018.3,333.7 1019.0,331.8 1019.8,331.8 1020.6,332.4 1021.3,327.5 1022.1,330.7 1022.8,333.4 1023.6,334.2 1024.3,329.4 1025.1,332.2 1025.8,333.8 1026.6,333.2 1027.3,332.3 1028.1,333.5 1028.8,333.8 1029.6,332.9 1030.3,334.3 1031.1,333.1 1031.8,331.7 1032.6,334.6 1033.3,332.2 1034.1,278.4 1034.8,329.7 1035.6,329.5 1036.3,331.9 1037.1,332.7 1037.8,331.9 1038.6,330.9 1039.3,328.6 1040.1,329.4 1040.8,334.0 1041.6,332.6 1042.3,333.5 1043.1,333.9 1043.8,330.0 1044.6,331.2 1045.3,331.2 1046.1,334.5 1046.8,330.6 1047.6,334.1 1048.3,332.7 1049.1,333.9 1049.8,332.6 1050.6,334.5 1051.3,333.3 1052.1,333.2 1052.8,328.5 1053.6,328.6 1054.3,332.6 1055.1,333.9 1055.8,333.6 1056.6,331.3 1057.3,329.0 1058.1,331.5 1058.8,332.4 1059.6,329.2 1060.3,328.2 1061.1,318.8 1061.8,328.7 1062.6,325.7 1063.3,318.9 1064.1,327.5 1064.8,321.9 1065.6,288.2 1066.3,323.1 1067.1,322.3 1067.8,297.6 1068.6,322.1 1069.3,312.9 1070.1,324.3 1070.8,280.0 1071.6,325.1 1072.3,310.5 1073.1,327.3 1073.8,326.5 1074.6,324.1 1075.3,239.1 1076.1,330.4 1076.8,315.2 1077.6,332.5 1078.3,330.8 1079.1,327.0 1079.8,332.5 1080.6,328.3 1081.4,332.2 1082.1,331.6 1082.9,333.6 1083.6,327.9 1084.4,330.2 1085.1,330.4 1085.9,332.5 1086.6,333.5 1087.4,333.3 1088.1,333.4 1088.9,334.0 1089.6,334.0 1090.4,333.6 1091.1,334.8 1091.9,332.8 1092.6,329.0 1093.4,332.2 1094.1,329.4 1094.9,331.3 1095.6,334.2 1096.4,333.1 1097.1,332.7 1097.9,332.4 1098.6,332.2 1099.4,331.1 1100.1,333.4 1100.9,333.9 1101.6,332.4 1102.4,334.6 1103.1,332.8 1103.9,334.9 1104.6,334.8 1105.4,333.7 1106.1,332.7 1106.9,334.2 1107.6,332.7 1108.4,334.2 1109.1,334.3 1109.9,328.8 1110.6,332.8 1111.4,334.1 1112.1,334.0 1112.9,333.2 1113.6,330.8 1114.4,334.2 1115.1,333.2 1115.9,328.7 1116.6,334.1 1117.4,330.0 1118.1,332.9 1118.9,333.6 1119.6,334.1 1120.4,334.1 1121.1,334.9 1121.9,334.9 1122.6,330.0 1123.4,322.3 1124.1,334.5 1124.9,327.1 1125.6,334.2 1126.4,329.6 1127.1,331.7 1127.9,334.2 1128.6,334.4 1129.4,332.0 1130.1,331.3 1130.9,332.7 1131.6,330.7 1132.4,332.9 1133.1,328.7 1133.9,332.6 1134.6,329.2 1135.4,331.4 1136.1,334.4 1136.9,334.2 1137.6,334.9 1138.4,333.8 1139.1,328.0 1139.9,334.6 1140.6,334.7 1141.4,332.9 1142.2,333.4 1142.9,334.4 1143.7,333.2 1144.4,334.3 1145.2,331.3 1145.9,329.7 1146.7,334.3 1147.4,333.0 1148.2,334.2 1148.9,332.9 1149.7,330.0 1150.4,330.9 1151.2,334.7 1151.9,329.8 1152.7,332.6 1153.4,332.6 1154.2,333.1 1154.9,334.1 1155.7,329.2 1156.4,332.4 1157.2,331.7 1157.9,332.6 1158.7,333.2 1159.4,334.2 1160.2,332.6 1160.9,322.3 1161.7,333.5 1162.4,329.3 1163.2,333.4 1163.9,333.7 1164.7,333.9 1165.4,330.6 1166.2,332.2 1166.9,331.9 1167.7,333.2 1168.4,332.5 1169.2,333.4 1169.9,333.0 1170.7,333.9 1171.4,327.1 1172.2,331.4 1172.9,329.9 1173.7,332.6 1174.4,333.2 1175.2,331.6 1175.9,334.4 1176.7,334.4 1177.4,334.5 1178.2,332.3 1178.9,328.5 1179.7,335.0 1180.4,333.5 1181.2,334.7 1181.9,334.5 1182.7,331.3 1183.4,333.4 1184.2,328.9 1184.9,334.3 1185.7,333.5 1186.4,329.5 1187.2,329.7 1187.9,331.9 1188.7,334.3 1189.4,329.4 1190.2,332.8 1190.9,334.5 1191.7,334.5 1192.4,330.0 1193.2,334.5 1193.9,333.2 1194.7,333.3 1195.4,334.1 1196.2,334.1 1196.9,332.4 1197.7,334.9 1198.4,333.1 1199.2,334.6 1199.9,332.8 1200.7,334.2 1201.4,332.5 1202.2,334.2 1203.0,334.9 1203.7,333.4 1204.5,334.2 1205.2,333.4 1206.0,332.7 1206.7,332.0 1207.5,334.9 1208.2,331.5 1209.0,332.5 1209.7,333.6 1210.5,334.7 1211.2,331.2 1212.0,332.6 1212.7,333.0 1213.5,328.3 1214.2,332.2 1215.0,328.8 1215.7,334.8 1216.5,331.1 1217.2,333.6 1218.0,332.2 1218.7,333.3 1219.5,331.2 1220.2,333.4 1221.0,333.4 1221.7,332.8 1222.5,329.8 1223.2,332.2 1224.0,334.6 1224.7,330.6 1225.5,330.4 1226.2,329.8 1227.0,332.0 1227.7,334.4 1228.5,333.0 1229.2,334.8 1230.0,334.8 1230.7,326.2 1231.5,332.4 1232.2,334.2 1233.0,334.0 1233.7,333.2 1234.5,330.5 1235.2,332.7 1236.0,331.5 1236.7,325.3 1237.5,327.5 1238.2,330.1 1239.0,318.8 1239.7,327.6 1240.5,325.2 1241.2,321.1 1242.0,326.2 1242.7,325.4 1243.5,325.9 1244.2,321.7 1245.0,297.6 1245.7,322.8 1246.5,321.9 1247.2,302.3 1248.0,328.8 1248.7,295.3 1249.5,329.1 1250.2,318.8 1251.0,332.2 1251.7,332.9 1252.5,328.8 1253.2,331.8 1254.0,331.9 1254.7,332.9 1255.5,333.0 1256.2,331.6 1257.0,329.6 1257.7,328.2 1258.5,331.6 1259.2,330.6 1260.0,331.7 1260.7,330.2 1261.5,334.3 1262.2,334.2 1263.0,332.5" fill="none" stroke="#129c57" stroke-width="1.8" stroke-linejoin="round"/>
<line x1="579.7" y1="567.3" x2="884" y2="567.3" stroke="#e5e5e5" stroke-width="1"/>
<text x="576" y="569.8" text-anchor="end" font-size="7" fill="#707070">0</text>
<line x1="579.7" y1="543.7" x2="884" y2="543.7" stroke="#e5e5e5" stroke-width="1"/>
<text x="576" y="546.2" text-anchor="end" font-size="7" fill="#707070">50</text>
<line x1="579.7" y1="520.2" x2="884" y2="520.2" stroke="#e5e5e5" stroke-width="1"/>
<text x="576" y="522.7" text-anchor="end" font-size="7" fill="#707070">100</text>
<line x1="579.7" y1="496.6" x2="884" y2="496.6" stroke="#e5e5e5" stroke-width="1"/>
<text x="576" y="499.1" text-anchor="end" font-size="7" fill="#707070">150</text>
<line x1="579.7" y1="473.1" x2="884" y2="473.1" stroke="#e5e5e5" stroke-width="1"/>
<text x="576" y="475.6" text-anchor="end" font-size="7" fill="#707070">200</text>
<line x1="579.7" y1="449.5" x2="884" y2="449.5" stroke="#e5e5e5" stroke-width="1"/>
<text x="576" y="452" text-anchor="end" font-size="7" fill="#707070">250</text>
<line x1="617.8" y1="449.5" x2="617.8" y2="567.3" stroke="#dadada" stroke-width="1"/>
<line x1="661.7" y1="449.5" x2="661.7" y2="567.3" stroke="#dadada" stroke-width="1"/>
<line x1="704.4" y1="449.5" x2="704.4" y2="567.3" stroke="#dadada" stroke-width="1"/>
<line x1="747" y1="449.5" x2="747" y2="567.3" stroke="#dadada" stroke-width="1"/>
<line x1="790.4" y1="449.5" x2="790.4" y2="567.3" stroke="#dadada" stroke-width="1"/>
<line x1="833.7" y1="449.5" x2="833.7" y2="567.3" stroke="#dadada" stroke-width="1"/>
<line x1="878" y1="449.5" x2="878" y2="567.3" stroke="#dadada" stroke-width="1"/>
<text x="617.8" y="579.5" text-anchor="middle" font-size="7.2" fill="#707070">Jul 2021</text>
<text x="661.7" y="579.5" text-anchor="middle" font-size="7.2" fill="#707070">Oct 2021</text>
<text x="704.4" y="579.5" text-anchor="middle" font-size="7.2" fill="#707070">Jan 2022</text>
<text x="747" y="579.5" text-anchor="middle" font-size="7.2" fill="#707070">Apr 2022</text>
<text x="790.4" y="579.5" text-anchor="middle" font-size="7.2" fill="#707070">Jul 2022</text>
<text x="833.7" y="579.5" text-anchor="middle" font-size="7.2" fill="#707070">Oct 2022</text>
<text x="878" y="579.5" text-anchor="middle" font-size="7.2" fill="#707070">Jan 2023</text>
<polygon points="579.7,567.3 579.7,551.8 580.3,535.4 580.9,520.8 581.5,551.1 582.1,513.1 582.7,530.8 583.3,548.2 583.9,544.7 584.5,516.1 585.1,501.8 585.7,538.4 586.3,525.9 586.9,520.2 587.5,537.1 588.1,546.7 588.7,519.0 589.3,529.4 589.9,526.6 590.5,523.3 591.1,525.8 591.7,524.9 592.3,543.1 592.9,526.4 593.5,515.5 594.1,538.8 594.7,521.5 595.3,544.8 595.9,524.8 596.5,520.5 597.1,538.4 597.7,477.8 598.3,543.0 598.9,550.2 599.5,520.4 600.1,536.7 600.7,546.7 601.3,513.1 601.9,545.8 602.5,513.3 603.1,545.2 603.7,552.0 604.3,545.6 604.9,531.3 605.5,536.5 606.1,520.9 606.7,501.8 607.3,540.7 607.9,545.5 608.5,547.5 609.1,509.7 609.7,506.0 610.3,536.3 610.9,546.4 611.5,540.5 612.1,512.9 612.7,527.4 613.3,533.3 613.9,530.6 614.5,548.0 615.1,499.4 615.7,545.1 616.3,522.8 616.9,536.3 617.5,547.2 618.1,527.0 618.7,546.2 619.3,550.8 619.9,529.5 620.5,516.5 621.1,541.9 621.7,522.5 622.3,536.6 622.9,546.8 623.5,547.9 624.1,540.4 624.7,527.5 625.3,535.7 625.9,517.8 626.5,545.4 627.1,536.2 627.7,542.9 628.3,458.0 628.9,533.3 629.5,540.1 630.1,537.8 630.7,541.8 631.3,526.4 631.9,474.9 632.5,546.6 633.1,538.8 633.7,543.5 634.3,520.7 634.9,517.0 635.5,533.9 636.1,511.7 636.7,533.2 637.3,525.4 637.9,520.3 638.5,547.9 639.1,530.9 639.7,524.9 640.3,538.7 640.9,522.2 641.5,521.0 642.1,526.3 642.7,551.9 643.3,540.2 643.9,547.3 644.5,504.6 645.1,540.3 645.7,540.2 646.3,540.4 646.9,551.0 647.5,522.4 648.1,529.7 648.7,547.0 649.3,531.8 649.9,550.4 650.5,531.4 651.1,541.2 651.7,474.9 652.3,547.5 652.9,524.9 653.5,530.6 654.1,517.8 654.7,537.0 655.3,538.6 655.9,537.5 656.5,531.0 657.1,466.5 657.7,535.1 658.3,545.1 658.9,550.1 659.5,530.7 660.1,518.8 660.7,520.6 661.3,528.4 661.9,543.7 662.5,540.9 663.1,543.9 663.7,539.5 664.3,537.2 664.9,541.1 665.5,538.7 666.1,535.9 666.7,531.3 667.3,537.5 667.9,541.3 668.5,529.0 669.1,524.9 669.7,548.4 670.3,530.1 670.9,543.8 671.5,546.2 672.1,541.2 672.7,542.1 673.3,541.9 673.9,525.8 674.5,543.2 675.1,546.6 675.7,544.8 676.3,529.3 676.9,540.3 677.5,541.7 678.1,532.9 678.7,529.6 679.3,538.6 679.9,524.9 680.5,543.8 681.1,542.0 681.7,537.2 682.3,544.4 682.9,543.6 683.5,545.4 684.1,543.8 684.7,531.6 685.3,532.5 685.9,547.0 686.5,542.0 687.1,534.1 687.7,531.2 688.3,537.5 688.9,534.0 689.5,544.4 690.1,532.8 690.7,532.0 691.3,540.8 691.9,544.4 692.5,548.7 693.1,536.0 693.7,536.0 694.3,549.4 694.9,538.4 695.5,529.5 696.1,548.8 696.7,546.5 697.3,548.2 697.9,540.1 698.5,544.4 699.1,513.2 699.7,537.3 700.3,497.6 700.9,531.5 701.5,528.2 702.1,532.8 702.7,517.0 703.3,492.9 703.9,531.9 704.5,530.4 705.1,534.3 705.7,529.2 706.3,546.6 706.9,510.8 707.5,531.0 708.1,547.1 708.7,549.2 709.3,546.3 709.9,560.2 710.5,532.6 711.1,546.2 711.7,518.0 712.3,532.4 712.9,542.8 713.5,506.0 714.1,545.8 714.7,519.1 715.3,529.1 715.9,540.9 716.5,543.7 717.1,510.8 717.7,534.5 718.3,537.7 718.9,538.8 719.5,527.1 720.1,499.0 720.7,550.2 721.3,544.5 721.9,538.1 722.5,532.8 723.1,544.1 723.7,551.3 724.3,524.9 724.9,539.5 725.5,526.2 726.1,531.6 726.7,552.1 727.3,551.6 727.9,536.5 728.5,517.0 729.1,520.6 729.7,535.5 730.3,521.7 730.9,520.0 731.5,537.6 732.2,526.8 732.8,539.2 733.4,545.4 734.0,526.2 734.6,491.9 735.2,530.1 735.8,522.4 736.4,518.5 737.0,537.3 737.6,541.0 738.2,521.0 738.8,520.5 739.4,510.8 740.0,536.5 740.6,526.8 741.2,528.5 741.8,546.5 742.4,539.4 743.0,525.4 743.6,540.1 744.2,525.8 744.8,533.5 745.4,513.1 746.0,531.8 746.6,547.3 747.2,534.7 747.8,546.4 748.4,519.9 749.0,533.7 749.6,537.9 750.2,547.2 750.8,531.9 751.4,539.1 752.0,546.2 752.6,552.0 753.2,539.2 753.8,531.5 754.4,533.7 755.0,517.8 755.6,538.9 756.2,519.9 756.8,522.2 757.4,536.2 758.0,532.2 758.6,538.6 759.2,508.4 759.8,550.4 760.4,522.6 761.0,541.9 761.6,548.3 762.2,536.5 762.8,527.8 763.4,537.6 764.0,539.9 764.6,527.3 765.2,546.6 765.8,552.4 766.4,491.9 767.0,531.9 767.6,522.6 768.2,536.8 768.8,496.6 769.4,549.7 770.0,503.7 770.6,534.2 771.2,535.4 771.8,550.8 772.4,545.0 773.0,538.9 773.6,538.5 774.2,532.5 774.8,521.8 775.4,538.1 776.0,546.7 776.6,525.1 777.2,547.1 777.8,538.9 778.4,540.1 779.0,465.5 779.6,540.3 780.2,533.6 780.8,530.8 781.4,525.9 782.0,513.6 782.6,536.0 783.2,529.1 783.8,537.5 784.4,542.4 785.0,520.9 785.6,526.8 786.2,516.9 786.8,495.2 787.4,532.9 788.0,548.4 788.6,550.9 789.2,546.0 789.8,537.9 790.4,519.0 791.0,536.4 791.6,534.8 792.2,521.1 792.8,541.6 793.4,521.5 794.0,547.8 794.6,535.8 795.2,522.5 795.8,525.3 796.4,537.9 797.0,542.7 797.6,519.3 798.2,540.4 798.8,541.4 799.4,544.0 800.0,544.5 800.6,524.4 801.2,538.9 801.8,507.1 802.4,545.6 803.0,541.9 803.6,520.8 804.2,531.6 804.8,536.2 805.4,549.5 806.0,539.4 806.6,510.8 807.2,535.3 807.8,514.9 808.4,542.3 809.0,538.4 809.6,520.5 810.2,521.6 810.8,534.8 811.4,539.6 812.0,527.5 812.6,525.2 813.2,531.4 813.8,515.5 814.4,546.8 815.0,524.5 815.6,528.1 816.2,516.5 816.8,525.6 817.4,538.2 818.0,548.2 818.6,519.4 819.2,522.4 819.8,510.8 820.4,530.2 821.0,535.8 821.6,539.1 822.2,532.4 822.8,492.9 823.4,537.3 824.0,519.3 824.6,520.0 825.2,539.5 825.8,487.2 826.4,537.7 827.0,538.7 827.6,520.2 828.2,549.4 828.8,533.5 829.4,500.4 830.0,536.3 830.6,521.3 831.2,546.2 831.8,531.2 832.4,526.9 833.0,539.7 833.6,517.4 834.2,533.6 834.8,517.8 835.4,546.1 836.0,464.6 836.6,541.7 837.2,525.9 837.8,530.8 838.4,525.1 839.0,541.7 839.6,534.5 840.2,538.7 840.8,514.9 841.4,531.8 842.0,536.3 842.6,543.7 843.2,476.4 843.8,531.8 844.4,541.9 845.0,499.0 845.6,531.2 846.2,518.0 846.8,545.4 847.4,510.4 848.0,525.7 848.6,524.2 849.2,520.0 849.8,523.1 850.4,533.5 851.0,527.0 851.6,543.2 852.2,550.1 852.8,529.2 853.4,534.3 854.0,507.0 854.6,542.5 855.2,520.6 855.8,517.2 856.4,515.3 857.0,514.7 857.6,499.4 858.2,542.0 858.8,544.8 859.4,540.4 860.0,549.1 860.6,547.4 861.2,550.8 861.8,519.8 862.4,540.3 863.0,514.5 863.6,536.5 864.2,519.0 864.8,524.5 865.4,535.8 866.0,533.7 866.6,542.5 867.2,539.9 867.8,541.6 868.4,542.3 869.0,536.7 869.6,532.3 870.2,536.6 870.8,534.5 871.4,523.8 872.0,552.7 872.6,547.8 873.2,540.4 873.8,514.0 874.4,529.8 875.0,491.0 875.6,532.6 876.2,545.5 876.8,518.3 877.4,542.9 878.0,528.2 878.6,528.9 879.2,523.8 879.8,503.7 880.4,536.0 881.0,550.8 881.6,540.3 882.2,506.9 882.8,521.1 883.4,528.7 884.0,546.1 884.0,567.3" fill="#17a862" fill-opacity="0.45"/>
<polyline points="579.7,551.8 580.3,535.4 580.9,520.8 581.5,551.1 582.1,513.1 582.7,530.8 583.3,548.2 583.9,544.7 584.5,516.1 585.1,501.8 585.7,538.4 586.3,525.9 586.9,520.2 587.5,537.1 588.1,546.7 588.7,519.0 589.3,529.4 589.9,526.6 590.5,523.3 591.1,525.8 591.7,524.9 592.3,543.1 592.9,526.4 593.5,515.5 594.1,538.8 594.7,521.5 595.3,544.8 595.9,524.8 596.5,520.5 597.1,538.4 597.7,477.8 598.3,543.0 598.9,550.2 599.5,520.4 600.1,536.7 600.7,546.7 601.3,513.1 601.9,545.8 602.5,513.3 603.1,545.2 603.7,552.0 604.3,545.6 604.9,531.3 605.5,536.5 606.1,520.9 606.7,501.8 607.3,540.7 607.9,545.5 608.5,547.5 609.1,509.7 609.7,506.0 610.3,536.3 610.9,546.4 611.5,540.5 612.1,512.9 612.7,527.4 613.3,533.3 613.9,530.6 614.5,548.0 615.1,499.4 615.7,545.1 616.3,522.8 616.9,536.3 617.5,547.2 618.1,527.0 618.7,546.2 619.3,550.8 619.9,529.5 620.5,516.5 621.1,541.9 621.7,522.5 622.3,536.6 622.9,546.8 623.5,547.9 624.1,540.4 624.7,527.5 625.3,535.7 625.9,517.8 626.5,545.4 627.1,536.2 627.7,542.9 628.3,458.0 628.9,533.3 629.5,540.1 630.1,537.8 630.7,541.8 631.3,526.4 631.9,474.9 632.5,546.6 633.1,538.8 633.7,543.5 634.3,520.7 634.9,517.0 635.5,533.9 636.1,511.7 636.7,533.2 637.3,525.4 637.9,520.3 638.5,547.9 639.1,530.9 639.7,524.9 640.3,538.7 640.9,522.2 641.5,521.0 642.1,526.3 642.7,551.9 643.3,540.2 643.9,547.3 644.5,504.6 645.1,540.3 645.7,540.2 646.3,540.4 646.9,551.0 647.5,522.4 648.1,529.7 648.7,547.0 649.3,531.8 649.9,550.4 650.5,531.4 651.1,541.2 651.7,474.9 652.3,547.5 652.9,524.9 653.5,530.6 654.1,517.8 654.7,537.0 655.3,538.6 655.9,537.5 656.5,531.0 657.1,466.5 657.7,535.1 658.3,545.1 658.9,550.1 659.5,530.7 660.1,518.8 660.7,520.6 661.3,528.4 661.9,543.7 662.5,540.9 663.1,543.9 663.7,539.5 664.3,537.2 664.9,541.1 665.5,538.7 666.1,535.9 666.7,531.3 667.3,537.5 667.9,541.3 668.5,529.0 669.1,524.9 669.7,548.4 670.3,530.1 670.9,543.8 671.5,546.2 672.1,541.2 672.7,542.1 673.3,541.9 673.9,525.8 674.5,543.2 675.1,546.6 675.7,544.8 676.3,529.3 676.9,540.3 677.5,541.7 678.1,532.9 678.7,529.6 679.3,538.6 679.9,524.9 680.5,543.8 681.1,542.0 681.7,537.2 682.3,544.4 682.9,543.6 683.5,545.4 684.1,543.8 684.7,531.6 685.3,532.5 685.9,547.0 686.5,542.0 687.1,534.1 687.7,531.2 688.3,537.5 688.9,534.0 689.5,544.4 690.1,532.8 690.7,532.0 691.3,540.8 691.9,544.4 692.5,548.7 693.1,536.0 693.7,536.0 694.3,549.4 694.9,538.4 695.5,529.5 696.1,548.8 696.7,546.5 697.3,548.2 697.9,540.1 698.5,544.4 699.1,513.2 699.7,537.3 700.3,497.6 700.9,531.5 701.5,528.2 702.1,532.8 702.7,517.0 703.3,492.9 703.9,531.9 704.5,530.4 705.1,534.3 705.7,529.2 706.3,546.6 706.9,510.8 707.5,531.0 708.1,547.1 708.7,549.2 709.3,546.3 709.9,560.2 710.5,532.6 711.1,546.2 711.7,518.0 712.3,532.4 712.9,542.8 713.5,506.0 714.1,545.8 714.7,519.1 715.3,529.1 715.9,540.9 716.5,543.7 717.1,510.8 717.7,534.5 718.3,537.7 718.9,538.8 719.5,527.1 720.1,499.0 720.7,550.2 721.3,544.5 721.9,538.1 722.5,532.8 723.1,544.1 723.7,551.3 724.3,524.9 724.9,539.5 725.5,526.2 726.1,531.6 726.7,552.1 727.3,551.6 727.9,536.5 728.5,517.0 729.1,520.6 729.7,535.5 730.3,521.7 730.9,520.0 731.5,537.6 732.2,526.8 732.8,539.2 733.4,545.4 734.0,526.2 734.6,491.9 735.2,530.1 735.8,522.4 736.4,518.5 737.0,537.3 737.6,541.0 738.2,521.0 738.8,520.5 739.4,510.8 740.0,536.5 740.6,526.8 741.2,528.5 741.8,546.5 742.4,539.4 743.0,525.4 743.6,540.1 744.2,525.8 744.8,533.5 745.4,513.1 746.0,531.8 746.6,547.3 747.2,534.7 747.8,546.4 748.4,519.9 749.0,533.7 749.6,537.9 750.2,547.2 750.8,531.9 751.4,539.1 752.0,546.2 752.6,552.0 753.2,539.2 753.8,531.5 754.4,533.7 755.0,517.8 755.6,538.9 756.2,519.9 756.8,522.2 757.4,536.2 758.0,532.2 758.6,538.6 759.2,508.4 759.8,550.4 760.4,522.6 761.0,541.9 761.6,548.3 762.2,536.5 762.8,527.8 763.4,537.6 764.0,539.9 764.6,527.3 765.2,546.6 765.8,552.4 766.4,491.9 767.0,531.9 767.6,522.6 768.2,536.8 768.8,496.6 769.4,549.7 770.0,503.7 770.6,534.2 771.2,535.4 771.8,550.8 772.4,545.0 773.0,538.9 773.6,538.5 774.2,532.5 774.8,521.8 775.4,538.1 776.0,546.7 776.6,525.1 777.2,547.1 777.8,538.9 778.4,540.1 779.0,465.5 779.6,540.3 780.2,533.6 780.8,530.8 781.4,525.9 782.0,513.6 782.6,536.0 783.2,529.1 783.8,537.5 784.4,542.4 785.0,520.9 785.6,526.8 786.2,516.9 786.8,495.2 787.4,532.9 788.0,548.4 788.6,550.9 789.2,546.0 789.8,537.9 790.4,519.0 791.0,536.4 791.6,534.8 792.2,521.1 792.8,541.6 793.4,521.5 794.0,547.8 794.6,535.8 795.2,522.5 795.8,525.3 796.4,537.9 797.0,542.7 797.6,519.3 798.2,540.4 798.8,541.4 799.4,544.0 800.0,544.5 800.6,524.4 801.2,538.9 801.8,507.1 802.4,545.6 803.0,541.9 803.6,520.8 804.2,531.6 804.8,536.2 805.4,549.5 806.0,539.4 806.6,510.8 807.2,535.3 807.8,514.9 808.4,542.3 809.0,538.4 809.6,520.5 810.2,521.6 810.8,534.8 811.4,539.6 812.0,527.5 812.6,525.2 813.2,531.4 813.8,515.5 814.4,546.8 815.0,524.5 815.6,528.1 816.2,516.5 816.8,525.6 817.4,538.2 818.0,548.2 818.6,519.4 819.2,522.4 819.8,510.8 820.4,530.2 821.0,535.8 821.6,539.1 822.2,532.4 822.8,492.9 823.4,537.3 824.0,519.3 824.6,520.0 825.2,539.5 825.8,487.2 826.4,537.7 827.0,538.7 827.6,520.2 828.2,549.4 828.8,533.5 829.4,500.4 830.0,536.3 830.6,521.3 831.2,546.2 831.8,531.2 832.4,526.9 833.0,539.7 833.6,517.4 834.2,533.6 834.8,517.8 835.4,546.1 836.0,464.6 836.6,541.7 837.2,525.9 837.8,530.8 838.4,525.1 839.0,541.7 839.6,534.5 840.2,538.7 840.8,514.9 841.4,531.8 842.0,536.3 842.6,543.7 843.2,476.4 843.8,531.8 844.4,541.9 845.0,499.0 845.6,531.2 846.2,518.0 846.8,545.4 847.4,510.4 848.0,525.7 848.6,524.2 849.2,520.0 849.8,523.1 850.4,533.5 851.0,527.0 851.6,543.2 852.2,550.1 852.8,529.2 853.4,534.3 854.0,507.0 854.6,542.5 855.2,520.6 855.8,517.2 856.4,515.3 857.0,514.7 857.6,499.4 858.2,542.0 858.8,544.8 859.4,540.4 860.0,549.1 860.6,547.4 861.2,550.8 861.8,519.8 862.4,540.3 863.0,514.5 863.6,536.5 864.2,519.0 864.8,524.5 865.4,535.8 866.0,533.7 866.6,542.5 867.2,539.9 867.8,541.6 868.4,542.3 869.0,536.7 869.6,532.3 870.2,536.6 870.8,534.5 871.4,523.8 872.0,552.7 872.6,547.8 873.2,540.4 873.8,514.0 874.4,529.8 875.0,491.0 875.6,532.6 876.2,545.5 876.8,518.3 877.4,542.9 878.0,528.2 878.6,528.9 879.2,523.8 879.8,503.7 880.4,536.0 881.0,550.8 881.6,540.3 882.2,506.9 882.8,521.1 883.4,528.7 884.0,546.1" fill="none" stroke="#129c57" stroke-width="1.8" stroke-linejoin="round"/>
<line x1="958.8" y1="580.1" x2="1263" y2="580.1" stroke="#e5e5e5" stroke-width="1"/>
<text x="955.5" y="582.6" text-anchor="end" font-size="7" fill="#707070">0</text>
<line x1="958.8" y1="541" x2="1263" y2="541" stroke="#e5e5e5" stroke-width="1"/>
<text x="955.5" y="543.5" text-anchor="end" font-size="7" fill="#707070">50</text>
<line x1="958.8" y1="502" x2="1263" y2="502" stroke="#e5e5e5" stroke-width="1"/>
<text x="955.5" y="504.5" text-anchor="end" font-size="7" fill="#707070">100</text>
<line x1="958.8" y1="462.9" x2="1263" y2="462.9" stroke="#e5e5e5" stroke-width="1"/>
<text x="955.5" y="465.4" text-anchor="end" font-size="7" fill="#707070">150</text>
<line x1="963.3" y1="462.9" x2="963.3" y2="580.1" stroke="#dadada" stroke-width="1"/>
<line x1="1004.4" y1="462.9" x2="1004.4" y2="580.1" stroke="#dadada" stroke-width="1"/>
<line x1="1046.7" y1="462.9" x2="1046.7" y2="580.1" stroke="#dadada" stroke-width="1"/>
<line x1="1089.7" y1="462.9" x2="1089.7" y2="580.1" stroke="#dadada" stroke-width="1"/>
<line x1="1130.5" y1="462.9" x2="1130.5" y2="580.1" stroke="#dadada" stroke-width="1"/>
<line x1="1170.9" y1="462.9" x2="1170.9" y2="580.1" stroke="#dadada" stroke-width="1"/>
<line x1="1213.6" y1="462.9" x2="1213.6" y2="580.1" stroke="#dadada" stroke-width="1"/>
<line x1="1255.6" y1="462.9" x2="1255.6" y2="580.1" stroke="#dadada" stroke-width="1"/>
<text x="963.3" y="592" text-anchor="middle" font-size="7.2" fill="#707070">Apr 2021</text>
<text x="1004.4" y="592" text-anchor="middle" font-size="7.2" fill="#707070">Jul 2021</text>
<text x="1046.7" y="592" text-anchor="middle" font-size="7.2" fill="#707070">Oct 2021</text>
<text x="1089.7" y="592" text-anchor="middle" font-size="7.2" fill="#707070">Jan 2022</text>
<text x="1130.5" y="592" text-anchor="middle" font-size="7.2" fill="#707070">Apr 2022</text>
<text x="1170.9" y="592" text-anchor="middle" font-size="7.2" fill="#707070">Jul 2022</text>
<text x="1213.6" y="592" text-anchor="middle" font-size="7.2" fill="#707070">Oct 2022</text>
<text x="1255.6" y="592" text-anchor="middle" font-size="7.2" fill="#707070">Jan 2023</text>
<polygon points="958.8,580.1 958.8,578.7 959.6,578.6 960.3,578.4 961.1,576.9 961.8,578.5 962.6,578.9 963.3,578.8 964.1,577.6 964.8,578.2 965.6,577.5 966.3,578.7 967.1,577.4 967.8,571.5 968.6,570.8 969.3,568.4 970.1,573.2 970.8,569.3 971.6,574.2 972.3,569.4 973.1,563.0 973.8,570.0 974.6,569.8 975.3,569.3 976.1,568.4 976.8,570.5 977.6,572.8 978.3,568.7 979.1,574.2 979.8,573.2 980.6,570.1 981.3,574.7 982.1,566.2 982.8,573.5 983.6,571.8 984.3,575.0 985.1,569.4 985.8,572.1 986.6,570.5 987.3,570.8 988.1,574.2 988.8,568.8 989.6,571.9 990.3,566.6 991.1,505.1 991.8,563.3 992.6,560.1 993.4,560.6 994.1,567.7 994.9,564.3 995.6,565.9 996.4,568.4 997.1,564.9 997.9,563.4 998.6,558.7 999.4,569.4 1000.1,563.8 1000.9,567.1 1001.6,567.7 1002.4,566.2 1003.1,572.0 1003.9,573.4 1004.6,576.5 1005.4,569.0 1006.1,573.1 1006.9,576.2 1007.6,575.9 1008.4,567.3 1009.1,576.1 1009.9,576.0 1010.6,572.8 1011.4,574.1 1012.1,572.5 1012.9,575.4 1013.6,572.6 1014.4,575.1 1015.1,574.1 1015.9,577.3 1016.6,571.4 1017.4,573.6 1018.1,571.6 1018.9,574.3 1019.6,575.1 1020.4,574.7 1021.1,572.0 1021.9,571.0 1022.6,572.7 1023.4,571.8 1024.1,575.0 1024.9,573.8 1025.6,577.3 1026.4,569.4 1027.2,575.7 1027.9,567.7 1028.7,575.0 1029.4,575.4 1030.2,573.2 1030.9,572.4 1031.7,573.2 1032.4,577.6 1033.2,575.4 1033.9,575.5 1034.7,572.6 1035.4,574.7 1036.2,573.8 1036.9,576.0 1037.7,567.8 1038.4,572.9 1039.2,575.7 1039.9,567.7 1040.7,505.9 1041.4,572.0 1042.2,576.4 1042.9,569.8 1043.7,577.2 1044.4,562.8 1045.2,567.2 1045.9,576.5 1046.7,568.5 1047.4,576.8 1048.2,575.7 1048.9,574.2 1049.7,566.4 1050.4,571.8 1051.2,572.6 1051.9,575.2 1052.7,576.0 1053.4,574.5 1054.2,569.1 1054.9,568.8 1055.7,575.2 1056.4,564.2 1057.2,575.4 1057.9,568.3 1058.7,575.1 1059.4,575.1 1060.2,570.5 1061.0,564.5 1061.7,569.0 1062.5,567.6 1063.2,570.4 1064.0,562.0 1064.7,570.8 1065.5,553.9 1066.2,561.9 1067.0,556.7 1067.7,565.3 1068.5,563.2 1069.2,561.0 1070.0,554.2 1070.7,561.8 1071.5,554.7 1072.2,528.5 1073.0,550.8 1073.7,549.8 1074.5,537.1 1075.2,551.5 1076.0,557.3 1076.7,550.8 1077.5,507.4 1078.2,553.9 1079.0,541.0 1079.7,549.6 1080.5,563.1 1081.2,480.1 1082.0,559.9 1082.7,558.3 1083.5,555.1 1084.2,563.5 1085.0,569.7 1085.7,565.1 1086.5,564.6 1087.2,559.1 1088.0,564.7 1088.7,573.9 1089.5,566.7 1090.2,577.1 1091.0,576.3 1091.7,577.5 1092.5,573.3 1093.2,571.8 1094.0,576.5 1094.8,574.2 1095.5,573.2 1096.3,568.9 1097.0,577.1 1097.8,575.7 1098.5,576.8 1099.3,575.0 1100.0,575.9 1100.8,575.6 1101.5,572.6 1102.3,575.7 1103.0,576.6 1103.8,577.7 1104.5,568.9 1105.3,574.9 1106.0,574.2 1106.8,575.7 1107.5,577.5 1108.3,571.9 1109.0,576.5 1109.8,574.6 1110.5,574.6 1111.3,575.5 1112.0,578.2 1112.8,567.8 1113.5,570.2 1114.3,575.9 1115.0,577.1 1115.8,578.0 1116.5,569.2 1117.3,576.7 1118.0,571.8 1118.8,576.5 1119.5,568.4 1120.3,576.5 1121.0,577.4 1121.8,573.4 1122.5,577.7 1123.3,576.7 1124.0,572.4 1124.8,577.5 1125.5,576.3 1126.3,573.6 1127.0,575.3 1127.8,575.4 1128.6,572.2 1129.3,576.1 1130.1,575.9 1130.8,570.6 1131.6,578.5 1132.3,575.2 1133.1,575.6 1133.8,571.6 1134.6,576.3 1135.3,577.4 1136.1,577.8 1136.8,576.0 1137.6,574.8 1138.3,576.9 1139.1,578.0 1139.8,576.6 1140.6,574.8 1141.3,573.9 1142.1,577.5 1142.8,573.7 1143.6,578.4 1144.3,575.5 1145.1,575.7 1145.8,572.5 1146.6,577.5 1147.3,575.6 1148.1,569.5 1148.8,576.9 1149.6,575.5 1150.3,575.4 1151.1,575.2 1151.8,570.7 1152.6,576.6 1153.3,570.1 1154.1,577.4 1154.8,576.7 1155.6,577.9 1156.3,575.8 1157.1,576.6 1157.8,573.8 1158.6,578.2 1159.3,575.8 1160.1,577.0 1160.8,577.9 1161.6,572.9 1162.4,577.7 1163.1,575.0 1163.9,571.4 1164.6,577.5 1165.4,572.1 1166.1,577.0 1166.9,573.6 1167.6,575.8 1168.4,577.6 1169.1,576.6 1169.9,573.6 1170.6,576.6 1171.4,572.2 1172.1,577.2 1172.9,575.7 1173.6,578.5 1174.4,576.3 1175.1,572.0 1175.9,576.9 1176.6,570.0 1177.4,571.6 1178.1,569.9 1178.9,572.0 1179.6,577.6 1180.4,575.8 1181.1,574.1 1181.9,577.1 1182.6,575.9 1183.4,577.9 1184.1,578.4 1184.9,577.3 1185.6,578.5 1186.4,574.6 1187.1,576.4 1187.9,575.5 1188.6,577.4 1189.4,574.7 1190.1,575.5 1190.9,572.2 1191.6,574.3 1192.4,577.0 1193.1,578.2 1193.9,576.8 1194.6,573.1 1195.4,574.9 1196.2,573.8 1196.9,578.4 1197.7,572.5 1198.4,576.1 1199.2,578.3 1199.9,577.7 1200.7,571.3 1201.4,573.1 1202.2,578.4 1202.9,572.8 1203.7,576.1 1204.4,569.7 1205.2,573.9 1205.9,573.6 1206.7,576.7 1207.4,578.4 1208.2,574.9 1208.9,575.1 1209.7,575.5 1210.4,577.6 1211.2,574.7 1211.9,575.0 1212.7,574.3 1213.4,576.8 1214.2,575.3 1214.9,577.5 1215.7,576.5 1216.4,573.0 1217.2,567.2 1217.9,573.2 1218.7,576.5 1219.4,572.2 1220.2,569.5 1220.9,575.9 1221.7,577.5 1222.4,575.7 1223.2,576.6 1223.9,578.2 1224.7,578.1 1225.4,577.5 1226.2,576.3 1226.9,573.4 1227.7,574.2 1228.4,577.7 1229.2,578.1 1230.0,575.5 1230.7,569.9 1231.5,575.4 1232.2,576.4 1233.0,566.4 1233.7,559.1 1234.5,566.4 1235.2,562.7 1236.0,571.2 1236.7,571.5 1237.5,560.2 1238.2,569.9 1239.0,546.5 1239.7,563.4 1240.5,563.2 1241.2,562.3 1242.0,537.1 1242.7,551.1 1243.5,554.3 1244.2,530.1 1245.0,554.7 1245.7,549.3 1246.5,522.3 1247.2,550.4 1248.0,549.1 1248.7,530.1 1249.5,555.1 1250.2,558.7 1251.0,550.4 1251.7,556.3 1252.5,565.5 1253.2,569.7 1254.0,568.4 1254.7,571.5 1255.5,572.8 1256.2,559.2 1257.0,573.9 1257.7,558.0 1258.5,568.9 1259.2,574.7 1260.0,566.8 1260.7,570.3 1261.5,572.3 1262.2,573.5 1263.0,574.4 1263.0,580.1" fill="#17a862" fill-opacity="0.45"/>
<polyline points="958.8,578.7 959.6,578.6 960.3,578.4 961.1,576.9 961.8,578.5 962.6,578.9 963.3,578.8 964.1,577.6 964.8,578.2 965.6,577.5 966.3,578.7 967.1,577.4 967.8,571.5 968.6,570.8 969.3,568.4 970.1,573.2 970.8,569.3 971.6,574.2 972.3,569.4 973.1,563.0 973.8,570.0 974.6,569.8 975.3,569.3 976.1,568.4 976.8,570.5 977.6,572.8 978.3,568.7 979.1,574.2 979.8,573.2 980.6,570.1 981.3,574.7 982.1,566.2 982.8,573.5 983.6,571.8 984.3,575.0 985.1,569.4 985.8,572.1 986.6,570.5 987.3,570.8 988.1,574.2 988.8,568.8 989.6,571.9 990.3,566.6 991.1,505.1 991.8,563.3 992.6,560.1 993.4,560.6 994.1,567.7 994.9,564.3 995.6,565.9 996.4,568.4 997.1,564.9 997.9,563.4 998.6,558.7 999.4,569.4 1000.1,563.8 1000.9,567.1 1001.6,567.7 1002.4,566.2 1003.1,572.0 1003.9,573.4 1004.6,576.5 1005.4,569.0 1006.1,573.1 1006.9,576.2 1007.6,575.9 1008.4,567.3 1009.1,576.1 1009.9,576.0 1010.6,572.8 1011.4,574.1 1012.1,572.5 1012.9,575.4 1013.6,572.6 1014.4,575.1 1015.1,574.1 1015.9,577.3 1016.6,571.4 1017.4,573.6 1018.1,571.6 1018.9,574.3 1019.6,575.1 1020.4,574.7 1021.1,572.0 1021.9,571.0 1022.6,572.7 1023.4,571.8 1024.1,575.0 1024.9,573.8 1025.6,577.3 1026.4,569.4 1027.2,575.7 1027.9,567.7 1028.7,575.0 1029.4,575.4 1030.2,573.2 1030.9,572.4 1031.7,573.2 1032.4,577.6 1033.2,575.4 1033.9,575.5 1034.7,572.6 1035.4,574.7 1036.2,573.8 1036.9,576.0 1037.7,567.8 1038.4,572.9 1039.2,575.7 1039.9,567.7 1040.7,505.9 1041.4,572.0 1042.2,576.4 1042.9,569.8 1043.7,577.2 1044.4,562.8 1045.2,567.2 1045.9,576.5 1046.7,568.5 1047.4,576.8 1048.2,575.7 1048.9,574.2 1049.7,566.4 1050.4,571.8 1051.2,572.6 1051.9,575.2 1052.7,576.0 1053.4,574.5 1054.2,569.1 1054.9,568.8 1055.7,575.2 1056.4,564.2 1057.2,575.4 1057.9,568.3 1058.7,575.1 1059.4,575.1 1060.2,570.5 1061.0,564.5 1061.7,569.0 1062.5,567.6 1063.2,570.4 1064.0,562.0 1064.7,570.8 1065.5,553.9 1066.2,561.9 1067.0,556.7 1067.7,565.3 1068.5,563.2 1069.2,561.0 1070.0,554.2 1070.7,561.8 1071.5,554.7 1072.2,528.5 1073.0,550.8 1073.7,549.8 1074.5,537.1 1075.2,551.5 1076.0,557.3 1076.7,550.8 1077.5,507.4 1078.2,553.9 1079.0,541.0 1079.7,549.6 1080.5,563.1 1081.2,480.1 1082.0,559.9 1082.7,558.3 1083.5,555.1 1084.2,563.5 1085.0,569.7 1085.7,565.1 1086.5,564.6 1087.2,559.1 1088.0,564.7 1088.7,573.9 1089.5,566.7 1090.2,577.1 1091.0,576.3 1091.7,577.5 1092.5,573.3 1093.2,571.8 1094.0,576.5 1094.8,574.2 1095.5,573.2 1096.3,568.9 1097.0,577.1 1097.8,575.7 1098.5,576.8 1099.3,575.0 1100.0,575.9 1100.8,575.6 1101.5,572.6 1102.3,575.7 1103.0,576.6 1103.8,577.7 1104.5,568.9 1105.3,574.9 1106.0,574.2 1106.8,575.7 1107.5,577.5 1108.3,571.9 1109.0,576.5 1109.8,574.6 1110.5,574.6 1111.3,575.5 1112.0,578.2 1112.8,567.8 1113.5,570.2 1114.3,575.9 1115.0,577.1 1115.8,578.0 1116.5,569.2 1117.3,576.7 1118.0,571.8 1118.8,576.5 1119.5,568.4 1120.3,576.5 1121.0,577.4 1121.8,573.4 1122.5,577.7 1123.3,576.7 1124.0,572.4 1124.8,577.5 1125.5,576.3 1126.3,573.6 1127.0,575.3 1127.8,575.4 1128.6,572.2 1129.3,576.1 1130.1,575.9 1130.8,570.6 1131.6,578.5 1132.3,575.2 1133.1,575.6 1133.8,571.6 1134.6,576.3 1135.3,577.4 1136.1,577.8 1136.8,576.0 1137.6,574.8 1138.3,576.9 1139.1,578.0 1139.8,576.6 1140.6,574.8 1141.3,573.9 1142.1,577.5 1142.8,573.7 1143.6,578.4 1144.3,575.5 1145.1,575.7 1145.8,572.5 1146.6,577.5 1147.3,575.6 1148.1,569.5 1148.8,576.9 1149.6,575.5 1150.3,575.4 1151.1,575.2 1151.8,570.7 1152.6,576.6 1153.3,570.1 1154.1,577.4 1154.8,576.7 1155.6,577.9 1156.3,575.8 1157.1,576.6 1157.8,573.8 1158.6,578.2 1159.3,575.8 1160.1,577.0 1160.8,577.9 1161.6,572.9 1162.4,577.7 1163.1,575.0 1163.9,571.4 1164.6,577.5 1165.4,572.1 1166.1,577.0 1166.9,573.6 1167.6,575.8 1168.4,577.6 1169.1,576.6 1169.9,573.6 1170.6,576.6 1171.4,572.2 1172.1,577.2 1172.9,575.7 1173.6,578.5 1174.4,576.3 1175.1,572.0 1175.9,576.9 1176.6,570.0 1177.4,571.6 1178.1,569.9 1178.9,572.0 1179.6,577.6 1180.4,575.8 1181.1,574.1 1181.9,577.1 1182.6,575.9 1183.4,577.9 1184.1,578.4 1184.9,577.3 1185.6,578.5 1186.4,574.6 1187.1,576.4 1187.9,575.5 1188.6,577.4 1189.4,574.7 1190.1,575.5 1190.9,572.2 1191.6,574.3 1192.4,577.0 1193.1,578.2 1193.9,576.8 1194.6,573.1 1195.4,574.9 1196.2,573.8 1196.9,578.4 1197.7,572.5 1198.4,576.1 1199.2,578.3 1199.9,577.7 1200.7,571.3 1201.4,573.1 1202.2,578.4 1202.9,572.8 1203.7,576.1 1204.4,569.7 1205.2,573.9 1205.9,573.6 1206.7,576.7 1207.4,578.4 1208.2,574.9 1208.9,575.1 1209.7,575.5 1210.4,577.6 1211.2,574.7 1211.9,575.0 1212.7,574.3 1213.4,576.8 1214.2,575.3 1214.9,577.5 1215.7,576.5 1216.4,573.0 1217.2,567.2 1217.9,573.2 1218.7,576.5 1219.4,572.2 1220.2,569.5 1220.9,575.9 1221.7,577.5 1222.4,575.7 1223.2,576.6 1223.9,578.2 1224.7,578.1 1225.4,577.5 1226.2,576.3 1226.9,573.4 1227.7,574.2 1228.4,577.7 1229.2,578.1 1230.0,575.5 1230.7,569.9 1231.5,575.4 1232.2,576.4 1233.0,566.4 1233.7,559.1 1234.5,566.4 1235.2,562.7 1236.0,571.2 1236.7,571.5 1237.5,560.2 1238.2,569.9 1239.0,546.5 1239.7,563.4 1240.5,563.2 1241.2,562.3 1242.0,537.1 1242.7,551.1 1243.5,554.3 1244.2,530.1 1245.0,554.7 1245.7,549.3 1246.5,522.3 1247.2,550.4 1248.0,549.1 1248.7,530.1 1249.5,555.1 1250.2,558.7 1251.0,550.4 1251.7,556.3 1252.5,565.5 1253.2,569.7 1254.0,568.4 1254.7,571.5 1255.5,572.8 1256.2,559.2 1257.0,573.9 1257.7,558.0 1258.5,568.9 1259.2,574.7 1260.0,566.8 1260.7,570.3 1261.5,572.3 1262.2,573.5 1263.0,574.4" fill="none" stroke="#129c57" stroke-width="1.8" stroke-linejoin="round"/>
</svg>
</body></html>
